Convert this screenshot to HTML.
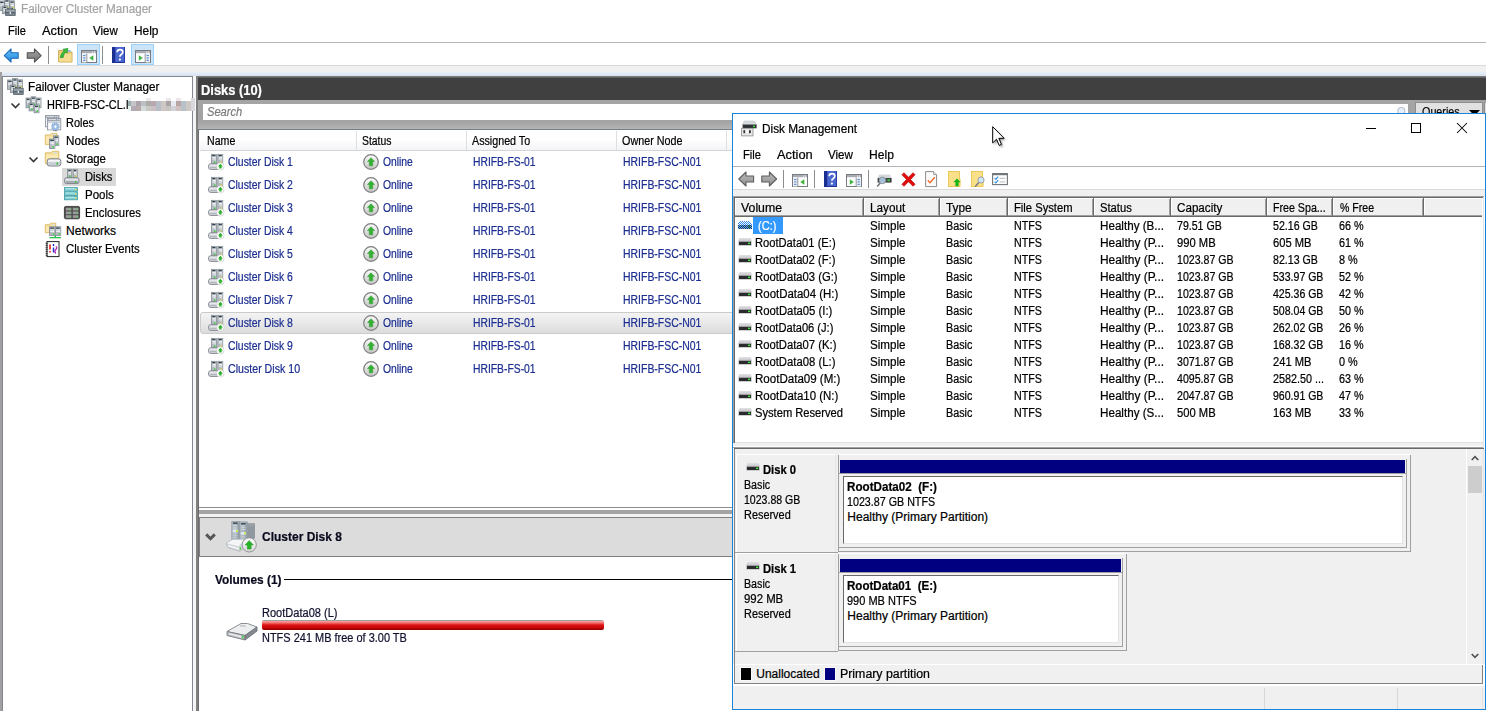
<!DOCTYPE html>
<html><head><meta charset="utf-8"><title>Failover Cluster Manager</title>
<style>
*{box-sizing:border-box;margin:0;padding:0}
html,body{width:1486px;height:711px;overflow:hidden;background:#fff}
body{font-family:"Liberation Sans",sans-serif;font-size:12px;color:#000;position:relative}
.a{position:absolute}
svg.a{overflow:visible}
.t{position:absolute;white-space:pre;transform-origin:0 0;-webkit-text-stroke:0.22px currentColor}
</style></head><body>
<svg class="a" style="left:0px;top:0.4px" width="17" height="17" viewBox="0 0 17 17"><rect x="-0.6" y="1" width="5" height="9.5" fill="#b4bbc2" stroke="#7a838b" stroke-width="0.7"/><rect x="2.15" y="1.4" width="1.85" height="8.7" fill="#c9ced3"/><rect x="0.3" y="1.8" width="3.2" height="1.1" fill="#25343c"/><rect x="0.3" y="3.6" width="3.2" height="0.9" fill="#f6f8fa"/><rect x="0.3" y="5.2" width="3.2" height="0.9" fill="#f6f8fa"/><rect x="2" y="8.1" width="1.5" height="1.6" fill="#3d3"/><rect x="4.6" y="-0.4" width="4.8" height="9" fill="#b4bbc2" stroke="#7a838b" stroke-width="0.7"/><rect x="7.24" y="0" width="1.76" height="8.2" fill="#c9ced3"/><rect x="5.5" y="0.4" width="3" height="1.1" fill="#25343c"/><rect x="5.5" y="2.2" width="3" height="0.9" fill="#f6f8fa"/><rect x="5.5" y="3.8" width="3" height="0.9" fill="#f6f8fa"/><rect x="7" y="6.2" width="1.5" height="1.6" fill="#cd3"/><rect x="9.8" y="0.8" width="4.8" height="8.6" fill="#b4bbc2" stroke="#7a838b" stroke-width="0.7"/><rect x="12.44" y="1.2" width="1.76" height="7.8" fill="#c9ced3"/><rect x="10.7" y="1.6" width="3" height="1.1" fill="#25343c"/><rect x="10.7" y="3.4" width="3" height="0.9" fill="#f6f8fa"/><rect x="10.7" y="5" width="3" height="0.9" fill="#f6f8fa"/><rect x="12.2" y="7" width="1.5" height="1.6" fill="#cd3"/><rect x="2.6" y="6" width="4.6" height="7.7" fill="#b4bbc2" stroke="#7a838b" stroke-width="0.7"/><rect x="5.13" y="6.4" width="1.67" height="6.9" fill="#c9ced3"/><rect x="3.5" y="6.8" width="2.8" height="1.1" fill="#25343c"/><rect x="3.5" y="8.6" width="2.8" height="0.9" fill="#f6f8fa"/><rect x="3.5" y="10.2" width="2.8" height="0.9" fill="#f6f8fa"/><rect x="4.8" y="11.3" width="1.5" height="1.6" fill="#b4bbc2"/><rect x="7.4" y="7.9" width="5.4" height="1.6" fill="#3c464e"/><rect x="8.6" y="8.6" width="3" height="1" fill="#e8ecef"/><rect x="5.6" y="9.3" width="9.6" height="6.2" fill="#7b8791" stroke="#56626c" stroke-width="0.8"/><rect x="6" y="9.7" width="8.8" height="1.9" fill="#9aa5ad"/><rect x="5.6" y="12.3" width="9.6" height="0.9" fill="#4a555e"/><rect x="9.7" y="11.8" width="1.3" height="2" fill="#f4f6f8"/></svg>
<div class="t" style="left:21.15px;top:2px;font-size:12px;line-height:14px;height:14px;color:#a4a4a4;transform:scaleX(0.9724);">Failover Cluster Manager</div>
<div class="t" style="left:8.15px;top:24px;font-size:12px;line-height:14px;height:14px;transform:scaleX(0.9206);">File</div>
<div class="t" style="left:41.95px;top:24px;font-size:12px;line-height:14px;height:14px;transform:scaleX(1.0711);">Action</div>
<div class="t" style="left:92.95px;top:24px;font-size:12px;line-height:14px;height:14px;transform:scaleX(0.9569);">View</div>
<div class="t" style="left:134.05px;top:24px;font-size:12px;line-height:14px;height:14px;transform:scaleX(0.9918);">Help</div>
<div class="a" style="left:0px;top:42px;width:1486px;height:1px;background:#b4b4b4"></div>
<svg class="a" style="left:3px;top:47.6px" width="17" height="16" viewBox="0 0 17 17"><defs><linearGradient id="glb" x1="0" y1="0" x2="0" y2="1"><stop offset="0" stop-color="#6cc3f7"/><stop offset="1" stop-color="#1d86dd"/></linearGradient></defs><path d="M0.8 8 L8 1 V5 H15.6 V11 H8 V15 Z" fill="url(#glb)" stroke="#1565b8" stroke-width="1.1" stroke-linejoin="round"/></svg>
<svg class="a" style="left:26px;top:47.6px" width="17" height="16" viewBox="0 0 17 17"><defs><linearGradient id="grd" x1="0" y1="0" x2="0" y2="1"><stop offset="0" stop-color="#a9a9a9"/><stop offset="1" stop-color="#6f6f6f"/></linearGradient></defs><path d="M0.8 8 L8 1 V5 H15.6 V11 H8 V15 Z" fill="url(#grd)" stroke="#4f4f4f" stroke-width="1.1" stroke-linejoin="round" transform="translate(16.4,0) scale(-1,1)"/></svg>
<div class="a" style="left:48px;top:46px;width:1px;height:18px;background:#8d8d8d"></div>
<svg class="a" style="left:57.6px;top:47.4px" width="15" height="16" viewBox="0 0 15 16"><path d="M0.6 15V3.5h4.6l1.2 1.5H14V15z" fill="#efcf78" stroke="#c9a548" stroke-width="0.9"/><rect x="1.1" y="6.6" width="12.4" height="7.9" fill="#f5dc93"/><rect x="9.6" y="3.2" width="3" height="1.3" fill="#6fa8e8"/><path d="M2.2 10.6q0.6-4.6 4-6.6l-1.3-1.7 5-0.9-1 4.9-1.2-1.4q-2 1.6-2.6 5.6z" fill="#3fbf3f" stroke="#1f8f2a" stroke-width="0.7"/></svg>
<div class="a" style="left:77px;top:44px;width:23px;height:21px;background:#cce4f7;border:1px solid #99d1ff"></div>
<svg class="a" style="left:81px;top:50px" width="16" height="13" viewBox="0 0 16 13"><rect x="0.5" y="0.5" width="15" height="12" fill="#fdfdfd" stroke="#787c82" stroke-width="1"/><rect x="1" y="1" width="14" height="2.2" fill="#a9adb3"/><rect x="11.2" y="1.6" width="1" height="1" fill="#fff"/><rect x="13" y="1.6" width="1" height="1" fill="#fff"/><rect x="1" y="3.5" width="4.5" height="9" fill="#eef0f3"/><path d="M5.8 3.5v9" stroke="#787c82" stroke-width="0.8"/><rect x="2.2" y="5" width="2.2" height="1.1" fill="#4a86d8"/><rect x="2.2" y="7.4" width="2.2" height="1.1" fill="#4a86d8"/><rect x="2.2" y="9.8" width="2.2" height="1.1" fill="#4a86d8"/><path d="M12.3 5.2v5.6l-4-2.8z" fill="#3cb43c"/></svg>
<div class="a" style="left:102px;top:46px;width:1px;height:18px;background:#8d8d8d"></div>
<svg class="a" style="left:112px;top:47px" width="13" height="16" viewBox="0 0 13 16"><rect x="0" y="0" width="13" height="16" fill="#4a66cf"/><rect x="0" y="0" width="3.2" height="16" fill="#1a2f8f"/><rect x="0" y="15" width="13" height="1" fill="#1a2f8f"/><rect x="12" y="0" width="1" height="16" fill="#2a3fa6"/><path d="M5.2 5.2q0-2.6 2.8-2.6t2.8 2.4q0 1.6-1.5 2.5t-1.4 2.3" fill="none" stroke="#fff" stroke-width="1.7"/><circle cx="7.9" cy="12.6" r="1.1" fill="#fff"/></svg>
<div class="a" style="left:131px;top:44px;width:23px;height:21px;background:#cce4f7;border:1px solid #99d1ff"></div>
<svg class="a" style="left:135px;top:50px" width="16" height="13" viewBox="0 0 16 13"><rect x="0.5" y="0.5" width="15" height="12" fill="#fdfdfd" stroke="#787c82" stroke-width="1"/><rect x="1" y="1" width="14" height="2.2" fill="#a9adb3"/><rect x="11.2" y="1.6" width="1" height="1" fill="#fff"/><rect x="13" y="1.6" width="1" height="1" fill="#fff"/><rect x="10.5" y="3.5" width="4.5" height="9" fill="#eef0f3"/><path d="M10.2 3.5v9" stroke="#787c82" stroke-width="0.8"/><rect x="11.6" y="5" width="2.2" height="1.1" fill="#4a86d8"/><rect x="11.6" y="7.4" width="2.2" height="1.1" fill="#4a86d8"/><rect x="11.6" y="9.8" width="2.2" height="1.1" fill="#4a86d8"/><path d="M3.8 5.2v5.6l4-2.8z" fill="#3cb43c"/></svg>
<div class="a" style="left:0px;top:65px;width:1486px;height:1px;background:#dadada"></div>
<div class="a" style="left:0px;top:66px;width:1486px;height:6px;background:#f0f0f0"></div>
<div class="a" style="left:0px;top:72px;width:1486px;height:4px;background:linear-gradient(#e9eff7,#d6e1f0)"></div>
<div class="a" style="left:0px;top:72px;width:2px;height:639px;background:#a0a0a0"></div>
<div class="a" style="left:2px;top:76px;width:191px;height:640px;background:#fff;border:1px solid #828790"></div>
<div class="a" style="left:193px;top:76px;width:3px;height:640px;background:#f5f5f5"></div>
<div class="a" style="left:196px;top:76px;width:2px;height:640px;background:#808080"></div>
<svg class="a" style="left:7.6px;top:79px" width="16" height="16" viewBox="0 0 16 16"><rect x="-0.6" y="1" width="5" height="9.5" fill="#b4bbc2" stroke="#7a838b" stroke-width="0.7"/><rect x="2.15" y="1.4" width="1.85" height="8.7" fill="#c9ced3"/><rect x="0.3" y="1.8" width="3.2" height="1.1" fill="#25343c"/><rect x="0.3" y="3.6" width="3.2" height="0.9" fill="#f6f8fa"/><rect x="0.3" y="5.2" width="3.2" height="0.9" fill="#f6f8fa"/><rect x="2" y="8.1" width="1.5" height="1.6" fill="#3d3"/><rect x="4.6" y="-0.4" width="4.8" height="9" fill="#b4bbc2" stroke="#7a838b" stroke-width="0.7"/><rect x="7.24" y="0" width="1.76" height="8.2" fill="#c9ced3"/><rect x="5.5" y="0.4" width="3" height="1.1" fill="#25343c"/><rect x="5.5" y="2.2" width="3" height="0.9" fill="#f6f8fa"/><rect x="5.5" y="3.8" width="3" height="0.9" fill="#f6f8fa"/><rect x="7" y="6.2" width="1.5" height="1.6" fill="#cd3"/><rect x="9.8" y="0.8" width="4.8" height="8.6" fill="#b4bbc2" stroke="#7a838b" stroke-width="0.7"/><rect x="12.44" y="1.2" width="1.76" height="7.8" fill="#c9ced3"/><rect x="10.7" y="1.6" width="3" height="1.1" fill="#25343c"/><rect x="10.7" y="3.4" width="3" height="0.9" fill="#f6f8fa"/><rect x="10.7" y="5" width="3" height="0.9" fill="#f6f8fa"/><rect x="12.2" y="7" width="1.5" height="1.6" fill="#cd3"/><rect x="2.6" y="6" width="4.6" height="7.7" fill="#b4bbc2" stroke="#7a838b" stroke-width="0.7"/><rect x="5.13" y="6.4" width="1.67" height="6.9" fill="#c9ced3"/><rect x="3.5" y="6.8" width="2.8" height="1.1" fill="#25343c"/><rect x="3.5" y="8.6" width="2.8" height="0.9" fill="#f6f8fa"/><rect x="3.5" y="10.2" width="2.8" height="0.9" fill="#f6f8fa"/><rect x="4.8" y="11.3" width="1.5" height="1.6" fill="#b4bbc2"/><rect x="7.4" y="7.9" width="5.4" height="1.6" fill="#3c464e"/><rect x="8.6" y="8.6" width="3" height="1" fill="#e8ecef"/><rect x="5.6" y="9.3" width="9.6" height="6.2" fill="#7b8791" stroke="#56626c" stroke-width="0.8"/><rect x="6" y="9.7" width="8.8" height="1.9" fill="#9aa5ad"/><rect x="5.6" y="12.3" width="9.6" height="0.9" fill="#4a555e"/><rect x="9.7" y="11.8" width="1.3" height="2" fill="#f4f6f8"/></svg>
<div class="t" style="left:27.85px;top:80px;font-size:12px;line-height:14px;height:14px;transform:scaleX(0.9753);">Failover Cluster Manager</div>
<svg class="a" style="left:26px;top:97px" width="16" height="16" viewBox="0 0 16 16"><rect x="0" y="1" width="4.5" height="9.8" fill="#b4bbc2" stroke="#7a838b" stroke-width="0.7"/><rect x="2.48" y="1.4" width="1.62" height="9" fill="#c9ced3"/><rect x="0.9" y="1.8" width="2.7" height="1.1" fill="#25343c"/><rect x="0.9" y="3.6" width="2.7" height="0.9" fill="#f6f8fa"/><rect x="0.9" y="5.2" width="2.7" height="0.9" fill="#f6f8fa"/><rect x="2.1" y="8.4" width="1.5" height="1.6" fill="#3c3"/><rect x="5.1" y="-0.2" width="4.7" height="9" fill="#b4bbc2" stroke="#7a838b" stroke-width="0.7"/><rect x="7.69" y="0.2" width="1.72" height="8.2" fill="#c9ced3"/><rect x="6" y="0.6" width="2.9" height="1.1" fill="#25343c"/><rect x="6" y="2.4" width="2.9" height="0.9" fill="#f6f8fa"/><rect x="6" y="4" width="2.9" height="0.9" fill="#f6f8fa"/><rect x="7.4" y="6.4" width="1.5" height="1.6" fill="#3c3"/><rect x="10.4" y="1" width="4.6" height="9.8" fill="#b4bbc2" stroke="#7a838b" stroke-width="0.7"/><rect x="12.93" y="1.4" width="1.67" height="9" fill="#c9ced3"/><rect x="11.3" y="1.8" width="2.8" height="1.1" fill="#25343c"/><rect x="11.3" y="3.6" width="2.8" height="0.9" fill="#f6f8fa"/><rect x="11.3" y="5.2" width="2.8" height="0.9" fill="#f6f8fa"/><rect x="12.6" y="8.4" width="1.5" height="1.6" fill="#3c3"/><rect x="3.1" y="6" width="4.5" height="7.9" fill="#b4bbc2" stroke="#7a838b" stroke-width="0.7"/><rect x="5.58" y="6.4" width="1.62" height="7.1" fill="#c9ced3"/><rect x="4" y="6.8" width="2.7" height="1.1" fill="#25343c"/><rect x="4" y="8.6" width="2.7" height="0.9" fill="#f6f8fa"/><rect x="4" y="10.2" width="2.7" height="0.9" fill="#f6f8fa"/><rect x="5.2" y="11.5" width="1.5" height="1.6" fill="#3c3"/><rect x="8.1" y="8" width="4.9" height="7.8" fill="#b4bbc2" stroke="#7a838b" stroke-width="0.7"/><rect x="10.79" y="8.4" width="1.81" height="7" fill="#c9ced3"/><rect x="9" y="8.8" width="3.1" height="1.1" fill="#25343c"/><rect x="9" y="10.6" width="3.1" height="0.9" fill="#f6f8fa"/><rect x="9" y="12.2" width="3.1" height="0.9" fill="#f6f8fa"/><rect x="10.6" y="13.4" width="1.5" height="1.6" fill="#3c3"/></svg>
<svg class="a" style="left:10.5px;top:102.6px" width="9" height="6" viewBox="0 0 9 6"><path d="M0.5 0.5 L4.5 4.6 L8.5 0.5" fill="none" stroke="#3a3a3a" stroke-width="1.7"/></svg>
<div class="t" style="left:46.95px;top:98px;font-size:12px;line-height:14px;height:14px;transform:scaleX(0.9100);">HRIFB-FSC-CL.I</div>
<svg class="a" style="left:45px;top:115px" width="16" height="16" viewBox="0 0 16 16"><rect x="0.4" y="0.4" width="13.6" height="11.4" fill="#f1f3f5" stroke="#868e99" stroke-width="0.8"/><rect x="0.4" y="0.4" width="13.6" height="2.6" fill="#98a0ac"/><rect x="1.5" y="1.3" width="7.5" height="0.8" fill="#f4f6f8"/><rect x="10.2" y="1.1" width="1.1" height="1.1" fill="#f4f6f8"/><rect x="12" y="1.1" width="1.1" height="1.1" fill="#f4f6f8"/><rect x="2.4" y="3.5" width="13.4" height="11.4" fill="#e9ecf0" stroke="#868e99" stroke-width="0.8"/><rect x="2.4" y="3.5" width="13.4" height="2.5" fill="#98a0ac"/><rect x="3.6" y="4.3" width="7.4" height="0.8" fill="#f4f6f8"/><rect x="12.2" y="4.2" width="1.1" height="1.1" fill="#f4f6f8"/><rect x="14" y="4.2" width="1.1" height="1.1" fill="#f4f6f8"/><rect x="2.8" y="6.5" width="12.6" height="1.1" fill="#b7bec8"/><rect x="3.5" y="8.2" width="3.2" height="6" fill="#fff"/><circle cx="10.3" cy="11.6" r="3.5" fill="#a3c1e4" stroke="#86a8d4" stroke-width="1.3" stroke-dasharray="1.2 0.9"/><path d="M10.3 9.9l0.6 1.1 1.1 0.6-1.1 0.6-0.6 1.1-0.6-1.1-1.1-0.6 1.1-0.6z" fill="#fff"/><rect x="8.6" y="15.2" width="0.7" height="1" fill="#4a4f56"/><rect x="10" y="15.2" width="0.7" height="1" fill="#4a4f56"/><rect x="11.4" y="15.2" width="0.7" height="1" fill="#4a4f56"/></svg>
<div class="t" style="left:66.05px;top:116px;font-size:12px;line-height:14px;height:14px;transform:scaleX(0.9127);">Roles</div>
<svg class="a" style="left:45px;top:133px" width="16" height="16" viewBox="0 0 16 16"><path d="M0.3 1.9H5.26L6.44 0.4H12.1V11.6H0.3Z" fill="#f7dd98" stroke="#d8b65e" stroke-width="0.8"/><rect x="1.1" y="3.6" width="10.2" height="7.2" fill="#fbe9b4"/><rect x="7.62" y="1.2" width="3.07" height="1.1" fill="#cfe4fb"/><rect x="8.6" y="2.9" width="5.2" height="9.8" fill="#b4bbc2" stroke="#7a838b" stroke-width="0.7"/><rect x="11.46" y="3.3" width="1.94" height="9" fill="#c9ced3"/><rect x="9.5" y="3.7" width="3.4" height="1.1" fill="#25343c"/><rect x="9.5" y="5.5" width="3.4" height="0.9" fill="#f6f8fa"/><rect x="9.5" y="7.1" width="3.4" height="0.9" fill="#f6f8fa"/><rect x="11.4" y="10.3" width="1.5" height="1.6" fill="#3c3"/><rect x="4.4" y="6" width="5.5" height="9.6" fill="#b4bbc2" stroke="#7a838b" stroke-width="0.7"/><rect x="7.43" y="6.4" width="2.08" height="8.8" fill="#c9ced3"/><rect x="5.3" y="6.8" width="3.7" height="1.1" fill="#25343c"/><rect x="5.3" y="8.6" width="3.7" height="0.9" fill="#f6f8fa"/><rect x="5.3" y="10.2" width="3.7" height="0.9" fill="#f6f8fa"/><rect x="7.5" y="13.2" width="1.5" height="1.6" fill="#3c3"/></svg>
<div class="t" style="left:66.25px;top:134px;font-size:12px;line-height:14px;height:14px;transform:scaleX(0.9715);">Nodes</div>
<svg class="a" style="left:45px;top:151px" width="16" height="16" viewBox="0 0 16 16"><path d="M0.3 1.8H5.97L7.32 0.3H13.8V12.8H0.3Z" fill="#f7dd98" stroke="#d8b65e" stroke-width="0.8"/><rect x="1.1" y="3.5" width="11.9" height="8.5" fill="#fbe9b4"/><rect x="8.67" y="1.1" width="3.51" height="1.1" fill="#cfe4fb"/><rect x="2.2" y="7.8" width="13.6" height="7.2" rx="2.3" fill="#e6e8ec" stroke="#6c7078" stroke-width="0.9"/><rect x="3.2" y="11.2" width="11.6" height="2.8" fill="#c9cdd4"/><rect x="3.6" y="9" width="10.6" height="1.2" fill="#f6f7f9"/><rect x="11.6" y="11.4" width="1.5" height="2.3" fill="#2fc42f"/></svg>
<svg class="a" style="left:29.0px;top:156.6px" width="9" height="6" viewBox="0 0 9 6"><path d="M0.5 0.5 L4.5 4.6 L8.5 0.5" fill="none" stroke="#3a3a3a" stroke-width="1.7"/></svg>
<div class="t" style="left:66.05px;top:152px;font-size:12px;line-height:14px;height:14px;transform:scaleX(0.9491);">Storage</div>
<div class="a" style="left:62px;top:168px;width:54px;height:18px;background:#d9d9d9"></div>
<svg class="a" style="left:64px;top:169px" width="16" height="16" viewBox="0 0 16 16"><rect x="3.5" y="0.3" width="4.2" height="8.5" fill="#b4bbc2" stroke="#7a838b" stroke-width="0.7"/><rect x="5.81" y="0.7" width="1.49" height="7.7" fill="#c9ced3"/><rect x="4.4" y="1.1" width="2.4" height="1.1" fill="#25343c"/><rect x="4.4" y="2.9" width="2.4" height="0.9" fill="#f6f8fa"/><rect x="4.4" y="4.5" width="2.4" height="0.9" fill="#f6f8fa"/><rect x="5.3" y="6.4" width="1.5" height="1.6" fill="#3c3"/><rect x="9" y="0.3" width="4.2" height="8.5" fill="#b4bbc2" stroke="#7a838b" stroke-width="0.7"/><rect x="11.31" y="0.7" width="1.49" height="7.7" fill="#c9ced3"/><rect x="9.9" y="1.1" width="2.4" height="1.1" fill="#25343c"/><rect x="9.9" y="2.9" width="2.4" height="0.9" fill="#f6f8fa"/><rect x="9.9" y="4.5" width="2.4" height="0.9" fill="#f6f8fa"/><rect x="10.8" y="6.4" width="1.5" height="1.6" fill="#cc3"/><rect x="0.6" y="8.8" width="14.4" height="5.8" rx="2" fill="#e3e6ea" stroke="#70757c" stroke-width="0.9"/><rect x="1.5" y="11.8" width="12.6" height="2.2" fill="#a6abb2"/><rect x="11" y="12.1" width="1.6" height="1.6" fill="#3c3"/></svg>
<div class="t" style="left:84.75px;top:170px;font-size:12px;line-height:14px;height:14px;transform:scaleX(0.9307);">Disks</div>
<svg class="a" style="left:64px;top:187px" width="16" height="16" viewBox="0 0 16 16"><rect x="0.5" y="0.6" width="13" height="3.6" fill="#7fd0d4" stroke="#3f9aa3" stroke-width="0.8"/><rect x="1.5" y="1.2" width="9" height="0.9" fill="#c8eef0"/><rect x="11" y="1.8" width="1.4" height="1.4" fill="#f5e04a"/><rect x="0.5" y="4.9" width="13" height="3.6" fill="#7fd0d4" stroke="#3f9aa3" stroke-width="0.8"/><rect x="1.5" y="5.5" width="9" height="0.9" fill="#c8eef0"/><rect x="11" y="6.1" width="1.4" height="1.4" fill="#f5e04a"/><rect x="0.5" y="9.2" width="13" height="3.6" fill="#7fd0d4" stroke="#3f9aa3" stroke-width="0.8"/><rect x="1.5" y="9.8" width="9" height="0.9" fill="#c8eef0"/><rect x="11" y="10.4" width="1.4" height="1.4" fill="#f5e04a"/></svg>
<div class="t" style="left:85.25px;top:188px;font-size:12px;line-height:14px;height:14px;transform:scaleX(0.9594);">Pools</div>
<svg class="a" style="left:64px;top:205px" width="16" height="16" viewBox="0 0 16 16"><rect x="0.4" y="1.4" width="15.2" height="12.4" rx="1.4" fill="#4a4a4a" stroke="#2e2e2e" stroke-width="0.8"/><rect x="1.8" y="2.8" width="5.6" height="2.7" fill="#9b9b9b"/><rect x="5.4" y="3.7" width="1.3" height="1.1" fill="#5d5"/><rect x="1.8" y="6.5" width="5.6" height="2.7" fill="#9b9b9b"/><rect x="5.4" y="7.4" width="1.3" height="1.1" fill="#5d5"/><rect x="1.8" y="10.2" width="5.6" height="2.7" fill="#9b9b9b"/><rect x="5.4" y="11.1" width="1.3" height="1.1" fill="#5d5"/><rect x="8.8" y="2.8" width="5.6" height="2.7" fill="#9b9b9b"/><rect x="12.4" y="3.7" width="1.3" height="1.1" fill="#5d5"/><rect x="8.8" y="6.5" width="5.6" height="2.7" fill="#9b9b9b"/><rect x="12.4" y="7.4" width="1.3" height="1.1" fill="#5d5"/><rect x="8.8" y="10.2" width="5.6" height="2.7" fill="#9b9b9b"/><rect x="12.4" y="11.1" width="1.3" height="1.1" fill="#5d5"/></svg>
<div class="t" style="left:85.25px;top:206px;font-size:12px;line-height:14px;height:14px;transform:scaleX(0.9400);">Enclosures</div>
<svg class="a" style="left:45px;top:223px" width="16" height="16" viewBox="0 0 16 16"><path d="M0.3 1.7H4.71L5.76 0.2H10.8V9.7H0.3Z" fill="#f7dd98" stroke="#d8b65e" stroke-width="0.8"/><rect x="1.1" y="3.4" width="8.9" height="5.5" fill="#fbe9b4"/><rect x="6.81" y="1" width="2.73" height="1.1" fill="#cfe4fb"/><rect x="4.4" y="3.8" width="5.6" height="8.8" fill="#b4bbc2" stroke="#7a838b" stroke-width="0.7"/><rect x="7.48" y="4.2" width="2.12" height="8" fill="#c9ced3"/><rect x="5.3" y="4.6" width="3.8" height="1.1" fill="#25343c"/><rect x="5.3" y="6.4" width="3.8" height="0.9" fill="#f6f8fa"/><rect x="5.3" y="8" width="3.8" height="0.9" fill="#f6f8fa"/><rect x="7.6" y="10.2" width="1.5" height="1.6" fill="#3c3"/><rect x="10.2" y="3.8" width="5.6" height="8.8" fill="#b4bbc2" stroke="#7a838b" stroke-width="0.7"/><rect x="13.28" y="4.2" width="2.12" height="8" fill="#c9ced3"/><rect x="11.1" y="4.6" width="3.8" height="1.1" fill="#25343c"/><rect x="11.1" y="6.4" width="3.8" height="0.9" fill="#f6f8fa"/><rect x="11.1" y="8" width="3.8" height="0.9" fill="#f6f8fa"/><rect x="13.4" y="10.2" width="1.5" height="1.6" fill="#3c3"/><rect x="4.4" y="14" width="11.6" height="1.3" fill="#2fbf4f"/><rect x="9.4" y="12.6" width="1.6" height="1.6" fill="#2fbf4f"/></svg>
<div class="t" style="left:66.05px;top:224px;font-size:12px;line-height:14px;height:14px;">Networks</div>
<svg class="a" style="left:45px;top:241px" width="16" height="16" viewBox="0 0 16 16"><rect x="2" y="0.6" width="12" height="15" fill="#fff" stroke="#222" stroke-width="1"/><rect x="0.6" y="1.8" width="2" height="0.9" fill="#222"/><rect x="0.6" y="3.8" width="2" height="0.9" fill="#222"/><rect x="0.6" y="5.8" width="2" height="0.9" fill="#222"/><rect x="0.6" y="7.8" width="2" height="0.9" fill="#222"/><rect x="0.6" y="9.8" width="2" height="0.9" fill="#222"/><rect x="0.6" y="11.8" width="2" height="0.9" fill="#222"/><rect x="0.6" y="13.8" width="2" height="0.9" fill="#222"/><path d="M5 3.5v5M5 10v1.5" stroke="#e02020" stroke-width="1.6"/><path d="M8.5 3v2M8.5 6.5v5" stroke="#2230d0" stroke-width="1.4"/><path d="M10.8 5.5q2 1 0 3t0 4" stroke="#b020b0" stroke-width="1.2" fill="none"/></svg>
<div class="t" style="left:66.05px;top:242px;font-size:12px;line-height:14px;height:14px;transform:scaleX(0.9445);">Cluster Events</div>
<div class="a" style="left:192px;top:76px;width:1px;height:640px;background:#828790"></div>
<div class="a" style="left:128px;top:98px;width:67px;height:13px;overflow:hidden"><div style="position:absolute;left:0px;top:3px;width:3px;height:5px;background:#9aacac"></div><div style="position:absolute;left:0px;top:8px;width:3px;height:5px;background:#e6f2ee"></div><div style="position:absolute;left:3px;top:3px;width:5px;height:5px;background:#c6c4c8"></div><div style="position:absolute;left:3px;top:8px;width:5px;height:5px;background:#b4aab6"></div><div style="position:absolute;left:8px;top:3px;width:5px;height:5px;background:#aca4aa"></div><div style="position:absolute;left:8px;top:8px;width:5px;height:5px;background:#b8aaaa"></div><div style="position:absolute;left:13px;top:3px;width:5px;height:5px;background:#bcc0c6"></div><div style="position:absolute;left:13px;top:8px;width:5px;height:5px;background:#d4dadc"></div><div style="position:absolute;left:18px;top:3px;width:5px;height:5px;background:#aeaca8"></div><div style="position:absolute;left:18px;top:8px;width:5px;height:5px;background:#c6c8c2"></div><div style="position:absolute;left:23px;top:3px;width:5px;height:5px;background:#b8a8b0"></div><div style="position:absolute;left:23px;top:8px;width:5px;height:5px;background:#ccc0c6"></div><div style="position:absolute;left:28px;top:3px;width:5px;height:5px;background:#b8bec8"></div><div style="position:absolute;left:28px;top:8px;width:5px;height:5px;background:#b8bec8"></div><div style="position:absolute;left:33px;top:3px;width:5px;height:5px;background:#cec8c4"></div><div style="position:absolute;left:33px;top:8px;width:5px;height:5px;background:#cec8c4"></div><div style="position:absolute;left:38px;top:3px;width:5px;height:5px;background:#aaa4a4"></div><div style="position:absolute;left:38px;top:8px;width:5px;height:5px;background:#c6c4c0"></div><div style="position:absolute;left:43px;top:3px;width:5px;height:5px;background:#e8eaf4"></div><div style="position:absolute;left:43px;top:8px;width:5px;height:5px;background:#d0d2d8"></div><div style="position:absolute;left:48px;top:3px;width:5px;height:5px;background:#b8a6a4"></div><div style="position:absolute;left:48px;top:8px;width:5px;height:5px;background:#d0c0c0"></div><div style="position:absolute;left:53px;top:3px;width:5px;height:5px;background:#b8c0c8"></div><div style="position:absolute;left:53px;top:8px;width:5px;height:5px;background:#b8c0c8"></div><div style="position:absolute;left:58px;top:3px;width:5px;height:5px;background:#cec8c4"></div><div style="position:absolute;left:58px;top:8px;width:5px;height:5px;background:#cec8c4"></div><div style="position:absolute;left:18px;top:0px;width:5px;height:3px;background:#ebe7eb"></div><div style="position:absolute;left:38px;top:0px;width:5px;height:3px;background:#ebe7eb"></div><div style="position:absolute;left:48px;top:0px;width:5px;height:3px;background:#ebe7eb"></div><div style="position:absolute;left:0px;top:0px;width:3px;height:3px;background:#eaf4f8"></div><div style="position:absolute;left:63px;top:0px;width:4px;height:13px;background:#d9d9dd"></div></div>
<div class="a" style="left:198px;top:76px;width:1288px;height:2px;background:linear-gradient(#8a8a8a,#555)"></div>
<div class="a" style="left:198px;top:78px;width:1288px;height:22px;background:#404040"></div>
<div class="t" style="left:201.25px;top:82px;font-size:14px;line-height:16px;height:16px;color:#fff;font-weight:bold;transform:scaleX(0.9209);">Disks (10)</div>
<div class="a" style="left:198px;top:100px;width:1288px;height:30px;background:linear-gradient(#a5a5a5 0,#a2a2a2 66%,#a8a8a8 80%,#b4b4b4 96%,#77808a 97%,#77808a 100%)"></div>
<div class="a" style="left:203px;top:104px;width:1205px;height:16px;background:#fff"></div>
<div class="t" style="left:206.75px;top:105px;font-size:12.5px;line-height:14px;height:14px;color:#7a7a7a;font-style:italic;transform:scaleX(0.8902);">Search</div>
<svg class="a" style="left:1396px;top:105px" width="11" height="14" viewBox="0 0 11 14"><circle cx="5.3" cy="6" r="3.5" fill="#e6f0fb" stroke="#bcc6d2" stroke-width="1.2"/><path d="M8 9l2 2.6" stroke="#c8c8c8" stroke-width="1.5"/></svg>
<div class="a" style="left:1415px;top:102px;width:68px;height:22px;background:#e1e1e1;border:1px solid #8e8e8e"></div>
<div class="t" style="left:1421.75px;top:105px;font-size:12.5px;line-height:14px;height:14px;transform:scaleX(0.8617);">Queries</div>
<svg class="a" style="left:1469px;top:109.6px" width="11" height="6" viewBox="0 0 11 6"><path d="M0 0h11l-5.5 5.8z" fill="#000"/></svg>
<div class="a" style="left:1484px;top:102px;width:1px;height:22px;background:#8e8e8e"></div>
<div class="a" style="left:1485px;top:103px;width:1px;height:21px;background:#e1e1e1"></div>
<div class="a" style="left:198px;top:130px;width:1288px;height:378px;background:#fff"></div>
<div class="a" style="left:198px;top:130px;width:1px;height:581px;background:#6d6d6d"></div>
<div class="a" style="left:200px;top:131px;width:1286px;height:20px;background:linear-gradient(#fff 0,#fff 40%,#f2f3f5 100%)"></div>
<div class="a" style="left:200px;top:150px;width:1286px;height:1px;background:#d5d5d5"></div>
<div class="a" style="left:356px;top:131px;width:1px;height:19px;background:#dedfe1"></div>
<div class="a" style="left:466px;top:131px;width:1px;height:19px;background:#dedfe1"></div>
<div class="a" style="left:616px;top:131px;width:1px;height:19px;background:#dedfe1"></div>
<div class="a" style="left:726px;top:131px;width:1px;height:19px;background:#dedfe1"></div>
<div class="t" style="left:206.70px;top:134px;font-size:12.5px;line-height:14px;height:14px;transform:scaleX(0.8490);">Name</div>
<div class="t" style="left:362.15px;top:134px;font-size:12.5px;line-height:14px;height:14px;transform:scaleX(0.8327);">Status</div>
<div class="t" style="left:471.85px;top:134px;font-size:12.5px;line-height:14px;height:14px;transform:scaleX(0.8570);">Assigned To</div>
<div class="t" style="left:621.55px;top:134px;font-size:12.5px;line-height:14px;height:14px;transform:scaleX(0.8616);">Owner Node</div>
<svg class="a" style="left:208px;top:154px" width="17" height="17" viewBox="0 0 17 17"><rect x="3.4" y="0.3" width="5" height="9.5" fill="#b4bbc2" stroke="#7a838b" stroke-width="0.7"/><rect x="6.15" y="0.7" width="1.85" height="8.7" fill="#c9ced3"/><rect x="4.3" y="1.1" width="3.2" height="1.1" fill="#25343c"/><rect x="4.3" y="2.9" width="3.2" height="0.9" fill="#f6f8fa"/><rect x="4.3" y="4.5" width="3.2" height="0.9" fill="#f6f8fa"/><rect x="6" y="7.4" width="1.5" height="1.6" fill="#3c3"/><rect x="9.8" y="0.3" width="5" height="9.5" fill="#b4bbc2" stroke="#7a838b" stroke-width="0.7"/><rect x="12.55" y="0.7" width="1.85" height="8.7" fill="#c9ced3"/><rect x="10.7" y="1.1" width="3.2" height="1.1" fill="#25343c"/><rect x="10.7" y="2.9" width="3.2" height="0.9" fill="#f6f8fa"/><rect x="10.7" y="4.5" width="3.2" height="0.9" fill="#f6f8fa"/><rect x="12.4" y="7.4" width="1.5" height="1.6" fill="#cc3"/><rect x="0.6" y="9.8" width="14.6" height="5.6" rx="2" fill="#e6e8ec" stroke="#777c83" stroke-width="0.9"/><rect x="1.6" y="12.6" width="9" height="1.9" fill="#b4b8be"/><circle cx="12.4" cy="12.4" r="3.7" fill="#fff" stroke="#c9c9c9" stroke-width="0.6"/><path d="M12.4 9.8l2.5 2.6h-1.3v2.2h-2.4v-2.2h-1.3z" fill="#2fae2f"/></svg>
<div class="t" style="left:227.95px;top:155px;font-size:12.5px;line-height:14px;height:14px;color:#1b2e90;transform:scaleX(0.8337);">Cluster Disk 1</div>
<svg class="a" style="left:363px;top:153.8px" width="17" height="17" viewBox="0 0 17 17"><defs><linearGradient id="gon" x1="0" y1="0" x2="0" y2="1"><stop offset="0" stop-color="#fdfdfd"/><stop offset="1" stop-color="#c4c4c4"/></linearGradient></defs><circle cx="8" cy="8" r="7.3" fill="url(#gon)" stroke="#7d7d7d" stroke-width="1.2"/><path d="M8 3.7l3.6 3.9h-1.9v4.2h-3.4v-4.2h-1.9z" fill="#35b035" stroke="#2a9a2a" stroke-width="0.5"/></svg>
<div class="t" style="left:382.55px;top:155px;font-size:12.5px;line-height:14px;height:14px;color:#1b2e90;transform:scaleX(0.8264);">Online</div>
<div class="t" style="left:472.92px;top:155px;font-size:12.5px;line-height:14px;height:14px;color:#1b2e90;transform:scaleX(0.8268);">HRIFB-FS-01</div>
<div class="t" style="left:622.71px;top:155px;font-size:12.5px;line-height:14px;height:14px;color:#1b2e90;transform:scaleX(0.8362);">HRIFB-FSC-N01</div>
<svg class="a" style="left:208px;top:177px" width="17" height="17" viewBox="0 0 17 17"><rect x="3.4" y="0.3" width="5" height="9.5" fill="#b4bbc2" stroke="#7a838b" stroke-width="0.7"/><rect x="6.15" y="0.7" width="1.85" height="8.7" fill="#c9ced3"/><rect x="4.3" y="1.1" width="3.2" height="1.1" fill="#25343c"/><rect x="4.3" y="2.9" width="3.2" height="0.9" fill="#f6f8fa"/><rect x="4.3" y="4.5" width="3.2" height="0.9" fill="#f6f8fa"/><rect x="6" y="7.4" width="1.5" height="1.6" fill="#3c3"/><rect x="9.8" y="0.3" width="5" height="9.5" fill="#b4bbc2" stroke="#7a838b" stroke-width="0.7"/><rect x="12.55" y="0.7" width="1.85" height="8.7" fill="#c9ced3"/><rect x="10.7" y="1.1" width="3.2" height="1.1" fill="#25343c"/><rect x="10.7" y="2.9" width="3.2" height="0.9" fill="#f6f8fa"/><rect x="10.7" y="4.5" width="3.2" height="0.9" fill="#f6f8fa"/><rect x="12.4" y="7.4" width="1.5" height="1.6" fill="#cc3"/><rect x="0.6" y="9.8" width="14.6" height="5.6" rx="2" fill="#e6e8ec" stroke="#777c83" stroke-width="0.9"/><rect x="1.6" y="12.6" width="9" height="1.9" fill="#b4b8be"/><circle cx="12.4" cy="12.4" r="3.7" fill="#fff" stroke="#c9c9c9" stroke-width="0.6"/><path d="M12.4 9.8l2.5 2.6h-1.3v2.2h-2.4v-2.2h-1.3z" fill="#2fae2f"/></svg>
<div class="t" style="left:227.95px;top:178px;font-size:12.5px;line-height:14px;height:14px;color:#1b2e90;transform:scaleX(0.8337);">Cluster Disk 2</div>
<svg class="a" style="left:363px;top:176.8px" width="17" height="17" viewBox="0 0 17 17"><defs><linearGradient id="gon" x1="0" y1="0" x2="0" y2="1"><stop offset="0" stop-color="#fdfdfd"/><stop offset="1" stop-color="#c4c4c4"/></linearGradient></defs><circle cx="8" cy="8" r="7.3" fill="url(#gon)" stroke="#7d7d7d" stroke-width="1.2"/><path d="M8 3.7l3.6 3.9h-1.9v4.2h-3.4v-4.2h-1.9z" fill="#35b035" stroke="#2a9a2a" stroke-width="0.5"/></svg>
<div class="t" style="left:382.55px;top:178px;font-size:12.5px;line-height:14px;height:14px;color:#1b2e90;transform:scaleX(0.8264);">Online</div>
<div class="t" style="left:472.92px;top:178px;font-size:12.5px;line-height:14px;height:14px;color:#1b2e90;transform:scaleX(0.8268);">HRIFB-FS-01</div>
<div class="t" style="left:622.71px;top:178px;font-size:12.5px;line-height:14px;height:14px;color:#1b2e90;transform:scaleX(0.8362);">HRIFB-FSC-N01</div>
<svg class="a" style="left:208px;top:200px" width="17" height="17" viewBox="0 0 17 17"><rect x="3.4" y="0.3" width="5" height="9.5" fill="#b4bbc2" stroke="#7a838b" stroke-width="0.7"/><rect x="6.15" y="0.7" width="1.85" height="8.7" fill="#c9ced3"/><rect x="4.3" y="1.1" width="3.2" height="1.1" fill="#25343c"/><rect x="4.3" y="2.9" width="3.2" height="0.9" fill="#f6f8fa"/><rect x="4.3" y="4.5" width="3.2" height="0.9" fill="#f6f8fa"/><rect x="6" y="7.4" width="1.5" height="1.6" fill="#3c3"/><rect x="9.8" y="0.3" width="5" height="9.5" fill="#b4bbc2" stroke="#7a838b" stroke-width="0.7"/><rect x="12.55" y="0.7" width="1.85" height="8.7" fill="#c9ced3"/><rect x="10.7" y="1.1" width="3.2" height="1.1" fill="#25343c"/><rect x="10.7" y="2.9" width="3.2" height="0.9" fill="#f6f8fa"/><rect x="10.7" y="4.5" width="3.2" height="0.9" fill="#f6f8fa"/><rect x="12.4" y="7.4" width="1.5" height="1.6" fill="#cc3"/><rect x="0.6" y="9.8" width="14.6" height="5.6" rx="2" fill="#e6e8ec" stroke="#777c83" stroke-width="0.9"/><rect x="1.6" y="12.6" width="9" height="1.9" fill="#b4b8be"/><circle cx="12.4" cy="12.4" r="3.7" fill="#fff" stroke="#c9c9c9" stroke-width="0.6"/><path d="M12.4 9.8l2.5 2.6h-1.3v2.2h-2.4v-2.2h-1.3z" fill="#2fae2f"/></svg>
<div class="t" style="left:227.95px;top:201px;font-size:12.5px;line-height:14px;height:14px;color:#1b2e90;transform:scaleX(0.8337);">Cluster Disk 3</div>
<svg class="a" style="left:363px;top:199.8px" width="17" height="17" viewBox="0 0 17 17"><defs><linearGradient id="gon" x1="0" y1="0" x2="0" y2="1"><stop offset="0" stop-color="#fdfdfd"/><stop offset="1" stop-color="#c4c4c4"/></linearGradient></defs><circle cx="8" cy="8" r="7.3" fill="url(#gon)" stroke="#7d7d7d" stroke-width="1.2"/><path d="M8 3.7l3.6 3.9h-1.9v4.2h-3.4v-4.2h-1.9z" fill="#35b035" stroke="#2a9a2a" stroke-width="0.5"/></svg>
<div class="t" style="left:382.55px;top:201px;font-size:12.5px;line-height:14px;height:14px;color:#1b2e90;transform:scaleX(0.8264);">Online</div>
<div class="t" style="left:472.92px;top:201px;font-size:12.5px;line-height:14px;height:14px;color:#1b2e90;transform:scaleX(0.8268);">HRIFB-FS-01</div>
<div class="t" style="left:622.71px;top:201px;font-size:12.5px;line-height:14px;height:14px;color:#1b2e90;transform:scaleX(0.8362);">HRIFB-FSC-N01</div>
<svg class="a" style="left:208px;top:223px" width="17" height="17" viewBox="0 0 17 17"><rect x="3.4" y="0.3" width="5" height="9.5" fill="#b4bbc2" stroke="#7a838b" stroke-width="0.7"/><rect x="6.15" y="0.7" width="1.85" height="8.7" fill="#c9ced3"/><rect x="4.3" y="1.1" width="3.2" height="1.1" fill="#25343c"/><rect x="4.3" y="2.9" width="3.2" height="0.9" fill="#f6f8fa"/><rect x="4.3" y="4.5" width="3.2" height="0.9" fill="#f6f8fa"/><rect x="6" y="7.4" width="1.5" height="1.6" fill="#3c3"/><rect x="9.8" y="0.3" width="5" height="9.5" fill="#b4bbc2" stroke="#7a838b" stroke-width="0.7"/><rect x="12.55" y="0.7" width="1.85" height="8.7" fill="#c9ced3"/><rect x="10.7" y="1.1" width="3.2" height="1.1" fill="#25343c"/><rect x="10.7" y="2.9" width="3.2" height="0.9" fill="#f6f8fa"/><rect x="10.7" y="4.5" width="3.2" height="0.9" fill="#f6f8fa"/><rect x="12.4" y="7.4" width="1.5" height="1.6" fill="#cc3"/><rect x="0.6" y="9.8" width="14.6" height="5.6" rx="2" fill="#e6e8ec" stroke="#777c83" stroke-width="0.9"/><rect x="1.6" y="12.6" width="9" height="1.9" fill="#b4b8be"/><circle cx="12.4" cy="12.4" r="3.7" fill="#fff" stroke="#c9c9c9" stroke-width="0.6"/><path d="M12.4 9.8l2.5 2.6h-1.3v2.2h-2.4v-2.2h-1.3z" fill="#2fae2f"/></svg>
<div class="t" style="left:227.95px;top:224px;font-size:12.5px;line-height:14px;height:14px;color:#1b2e90;transform:scaleX(0.8337);">Cluster Disk 4</div>
<svg class="a" style="left:363px;top:222.8px" width="17" height="17" viewBox="0 0 17 17"><defs><linearGradient id="gon" x1="0" y1="0" x2="0" y2="1"><stop offset="0" stop-color="#fdfdfd"/><stop offset="1" stop-color="#c4c4c4"/></linearGradient></defs><circle cx="8" cy="8" r="7.3" fill="url(#gon)" stroke="#7d7d7d" stroke-width="1.2"/><path d="M8 3.7l3.6 3.9h-1.9v4.2h-3.4v-4.2h-1.9z" fill="#35b035" stroke="#2a9a2a" stroke-width="0.5"/></svg>
<div class="t" style="left:382.55px;top:224px;font-size:12.5px;line-height:14px;height:14px;color:#1b2e90;transform:scaleX(0.8264);">Online</div>
<div class="t" style="left:472.92px;top:224px;font-size:12.5px;line-height:14px;height:14px;color:#1b2e90;transform:scaleX(0.8268);">HRIFB-FS-01</div>
<div class="t" style="left:622.71px;top:224px;font-size:12.5px;line-height:14px;height:14px;color:#1b2e90;transform:scaleX(0.8362);">HRIFB-FSC-N01</div>
<svg class="a" style="left:208px;top:246px" width="17" height="17" viewBox="0 0 17 17"><rect x="3.4" y="0.3" width="5" height="9.5" fill="#b4bbc2" stroke="#7a838b" stroke-width="0.7"/><rect x="6.15" y="0.7" width="1.85" height="8.7" fill="#c9ced3"/><rect x="4.3" y="1.1" width="3.2" height="1.1" fill="#25343c"/><rect x="4.3" y="2.9" width="3.2" height="0.9" fill="#f6f8fa"/><rect x="4.3" y="4.5" width="3.2" height="0.9" fill="#f6f8fa"/><rect x="6" y="7.4" width="1.5" height="1.6" fill="#3c3"/><rect x="9.8" y="0.3" width="5" height="9.5" fill="#b4bbc2" stroke="#7a838b" stroke-width="0.7"/><rect x="12.55" y="0.7" width="1.85" height="8.7" fill="#c9ced3"/><rect x="10.7" y="1.1" width="3.2" height="1.1" fill="#25343c"/><rect x="10.7" y="2.9" width="3.2" height="0.9" fill="#f6f8fa"/><rect x="10.7" y="4.5" width="3.2" height="0.9" fill="#f6f8fa"/><rect x="12.4" y="7.4" width="1.5" height="1.6" fill="#cc3"/><rect x="0.6" y="9.8" width="14.6" height="5.6" rx="2" fill="#e6e8ec" stroke="#777c83" stroke-width="0.9"/><rect x="1.6" y="12.6" width="9" height="1.9" fill="#b4b8be"/><circle cx="12.4" cy="12.4" r="3.7" fill="#fff" stroke="#c9c9c9" stroke-width="0.6"/><path d="M12.4 9.8l2.5 2.6h-1.3v2.2h-2.4v-2.2h-1.3z" fill="#2fae2f"/></svg>
<div class="t" style="left:227.95px;top:247px;font-size:12.5px;line-height:14px;height:14px;color:#1b2e90;transform:scaleX(0.8337);">Cluster Disk 5</div>
<svg class="a" style="left:363px;top:245.8px" width="17" height="17" viewBox="0 0 17 17"><defs><linearGradient id="gon" x1="0" y1="0" x2="0" y2="1"><stop offset="0" stop-color="#fdfdfd"/><stop offset="1" stop-color="#c4c4c4"/></linearGradient></defs><circle cx="8" cy="8" r="7.3" fill="url(#gon)" stroke="#7d7d7d" stroke-width="1.2"/><path d="M8 3.7l3.6 3.9h-1.9v4.2h-3.4v-4.2h-1.9z" fill="#35b035" stroke="#2a9a2a" stroke-width="0.5"/></svg>
<div class="t" style="left:382.55px;top:247px;font-size:12.5px;line-height:14px;height:14px;color:#1b2e90;transform:scaleX(0.8264);">Online</div>
<div class="t" style="left:472.92px;top:247px;font-size:12.5px;line-height:14px;height:14px;color:#1b2e90;transform:scaleX(0.8268);">HRIFB-FS-01</div>
<div class="t" style="left:622.71px;top:247px;font-size:12.5px;line-height:14px;height:14px;color:#1b2e90;transform:scaleX(0.8362);">HRIFB-FSC-N01</div>
<svg class="a" style="left:208px;top:269px" width="17" height="17" viewBox="0 0 17 17"><rect x="3.4" y="0.3" width="5" height="9.5" fill="#b4bbc2" stroke="#7a838b" stroke-width="0.7"/><rect x="6.15" y="0.7" width="1.85" height="8.7" fill="#c9ced3"/><rect x="4.3" y="1.1" width="3.2" height="1.1" fill="#25343c"/><rect x="4.3" y="2.9" width="3.2" height="0.9" fill="#f6f8fa"/><rect x="4.3" y="4.5" width="3.2" height="0.9" fill="#f6f8fa"/><rect x="6" y="7.4" width="1.5" height="1.6" fill="#3c3"/><rect x="9.8" y="0.3" width="5" height="9.5" fill="#b4bbc2" stroke="#7a838b" stroke-width="0.7"/><rect x="12.55" y="0.7" width="1.85" height="8.7" fill="#c9ced3"/><rect x="10.7" y="1.1" width="3.2" height="1.1" fill="#25343c"/><rect x="10.7" y="2.9" width="3.2" height="0.9" fill="#f6f8fa"/><rect x="10.7" y="4.5" width="3.2" height="0.9" fill="#f6f8fa"/><rect x="12.4" y="7.4" width="1.5" height="1.6" fill="#cc3"/><rect x="0.6" y="9.8" width="14.6" height="5.6" rx="2" fill="#e6e8ec" stroke="#777c83" stroke-width="0.9"/><rect x="1.6" y="12.6" width="9" height="1.9" fill="#b4b8be"/><circle cx="12.4" cy="12.4" r="3.7" fill="#fff" stroke="#c9c9c9" stroke-width="0.6"/><path d="M12.4 9.8l2.5 2.6h-1.3v2.2h-2.4v-2.2h-1.3z" fill="#2fae2f"/></svg>
<div class="t" style="left:227.95px;top:270px;font-size:12.5px;line-height:14px;height:14px;color:#1b2e90;transform:scaleX(0.8337);">Cluster Disk 6</div>
<svg class="a" style="left:363px;top:268.8px" width="17" height="17" viewBox="0 0 17 17"><defs><linearGradient id="gon" x1="0" y1="0" x2="0" y2="1"><stop offset="0" stop-color="#fdfdfd"/><stop offset="1" stop-color="#c4c4c4"/></linearGradient></defs><circle cx="8" cy="8" r="7.3" fill="url(#gon)" stroke="#7d7d7d" stroke-width="1.2"/><path d="M8 3.7l3.6 3.9h-1.9v4.2h-3.4v-4.2h-1.9z" fill="#35b035" stroke="#2a9a2a" stroke-width="0.5"/></svg>
<div class="t" style="left:382.55px;top:270px;font-size:12.5px;line-height:14px;height:14px;color:#1b2e90;transform:scaleX(0.8264);">Online</div>
<div class="t" style="left:472.92px;top:270px;font-size:12.5px;line-height:14px;height:14px;color:#1b2e90;transform:scaleX(0.8268);">HRIFB-FS-01</div>
<div class="t" style="left:622.71px;top:270px;font-size:12.5px;line-height:14px;height:14px;color:#1b2e90;transform:scaleX(0.8362);">HRIFB-FSC-N01</div>
<svg class="a" style="left:208px;top:292px" width="17" height="17" viewBox="0 0 17 17"><rect x="3.4" y="0.3" width="5" height="9.5" fill="#b4bbc2" stroke="#7a838b" stroke-width="0.7"/><rect x="6.15" y="0.7" width="1.85" height="8.7" fill="#c9ced3"/><rect x="4.3" y="1.1" width="3.2" height="1.1" fill="#25343c"/><rect x="4.3" y="2.9" width="3.2" height="0.9" fill="#f6f8fa"/><rect x="4.3" y="4.5" width="3.2" height="0.9" fill="#f6f8fa"/><rect x="6" y="7.4" width="1.5" height="1.6" fill="#3c3"/><rect x="9.8" y="0.3" width="5" height="9.5" fill="#b4bbc2" stroke="#7a838b" stroke-width="0.7"/><rect x="12.55" y="0.7" width="1.85" height="8.7" fill="#c9ced3"/><rect x="10.7" y="1.1" width="3.2" height="1.1" fill="#25343c"/><rect x="10.7" y="2.9" width="3.2" height="0.9" fill="#f6f8fa"/><rect x="10.7" y="4.5" width="3.2" height="0.9" fill="#f6f8fa"/><rect x="12.4" y="7.4" width="1.5" height="1.6" fill="#cc3"/><rect x="0.6" y="9.8" width="14.6" height="5.6" rx="2" fill="#e6e8ec" stroke="#777c83" stroke-width="0.9"/><rect x="1.6" y="12.6" width="9" height="1.9" fill="#b4b8be"/><circle cx="12.4" cy="12.4" r="3.7" fill="#fff" stroke="#c9c9c9" stroke-width="0.6"/><path d="M12.4 9.8l2.5 2.6h-1.3v2.2h-2.4v-2.2h-1.3z" fill="#2fae2f"/></svg>
<div class="t" style="left:227.95px;top:293px;font-size:12.5px;line-height:14px;height:14px;color:#1b2e90;transform:scaleX(0.8337);">Cluster Disk 7</div>
<svg class="a" style="left:363px;top:291.8px" width="17" height="17" viewBox="0 0 17 17"><defs><linearGradient id="gon" x1="0" y1="0" x2="0" y2="1"><stop offset="0" stop-color="#fdfdfd"/><stop offset="1" stop-color="#c4c4c4"/></linearGradient></defs><circle cx="8" cy="8" r="7.3" fill="url(#gon)" stroke="#7d7d7d" stroke-width="1.2"/><path d="M8 3.7l3.6 3.9h-1.9v4.2h-3.4v-4.2h-1.9z" fill="#35b035" stroke="#2a9a2a" stroke-width="0.5"/></svg>
<div class="t" style="left:382.55px;top:293px;font-size:12.5px;line-height:14px;height:14px;color:#1b2e90;transform:scaleX(0.8264);">Online</div>
<div class="t" style="left:472.92px;top:293px;font-size:12.5px;line-height:14px;height:14px;color:#1b2e90;transform:scaleX(0.8268);">HRIFB-FS-01</div>
<div class="t" style="left:622.71px;top:293px;font-size:12.5px;line-height:14px;height:14px;color:#1b2e90;transform:scaleX(0.8362);">HRIFB-FSC-N01</div>
<div class="a" style="left:200px;top:312px;width:1286px;height:22px;background:linear-gradient(#f4f4f4,#dcdcdc);border:1px solid #cbcbcb;border-radius:3px"></div>
<svg class="a" style="left:208px;top:315px" width="17" height="17" viewBox="0 0 17 17"><rect x="3.4" y="0.3" width="5" height="9.5" fill="#b4bbc2" stroke="#7a838b" stroke-width="0.7"/><rect x="6.15" y="0.7" width="1.85" height="8.7" fill="#c9ced3"/><rect x="4.3" y="1.1" width="3.2" height="1.1" fill="#25343c"/><rect x="4.3" y="2.9" width="3.2" height="0.9" fill="#f6f8fa"/><rect x="4.3" y="4.5" width="3.2" height="0.9" fill="#f6f8fa"/><rect x="6" y="7.4" width="1.5" height="1.6" fill="#3c3"/><rect x="9.8" y="0.3" width="5" height="9.5" fill="#b4bbc2" stroke="#7a838b" stroke-width="0.7"/><rect x="12.55" y="0.7" width="1.85" height="8.7" fill="#c9ced3"/><rect x="10.7" y="1.1" width="3.2" height="1.1" fill="#25343c"/><rect x="10.7" y="2.9" width="3.2" height="0.9" fill="#f6f8fa"/><rect x="10.7" y="4.5" width="3.2" height="0.9" fill="#f6f8fa"/><rect x="12.4" y="7.4" width="1.5" height="1.6" fill="#cc3"/><rect x="0.6" y="9.8" width="14.6" height="5.6" rx="2" fill="#e6e8ec" stroke="#777c83" stroke-width="0.9"/><rect x="1.6" y="12.6" width="9" height="1.9" fill="#b4b8be"/><circle cx="12.4" cy="12.4" r="3.7" fill="#fff" stroke="#c9c9c9" stroke-width="0.6"/><path d="M12.4 9.8l2.5 2.6h-1.3v2.2h-2.4v-2.2h-1.3z" fill="#2fae2f"/></svg>
<div class="t" style="left:227.95px;top:316px;font-size:12.5px;line-height:14px;height:14px;color:#1b2e90;transform:scaleX(0.8337);">Cluster Disk 8</div>
<svg class="a" style="left:363px;top:314.8px" width="17" height="17" viewBox="0 0 17 17"><defs><linearGradient id="gon" x1="0" y1="0" x2="0" y2="1"><stop offset="0" stop-color="#fdfdfd"/><stop offset="1" stop-color="#c4c4c4"/></linearGradient></defs><circle cx="8" cy="8" r="7.3" fill="url(#gon)" stroke="#7d7d7d" stroke-width="1.2"/><path d="M8 3.7l3.6 3.9h-1.9v4.2h-3.4v-4.2h-1.9z" fill="#35b035" stroke="#2a9a2a" stroke-width="0.5"/></svg>
<div class="t" style="left:382.55px;top:316px;font-size:12.5px;line-height:14px;height:14px;color:#1b2e90;transform:scaleX(0.8264);">Online</div>
<div class="t" style="left:472.92px;top:316px;font-size:12.5px;line-height:14px;height:14px;color:#1b2e90;transform:scaleX(0.8268);">HRIFB-FS-01</div>
<div class="t" style="left:622.71px;top:316px;font-size:12.5px;line-height:14px;height:14px;color:#1b2e90;transform:scaleX(0.8362);">HRIFB-FSC-N01</div>
<svg class="a" style="left:208px;top:338px" width="17" height="17" viewBox="0 0 17 17"><rect x="3.4" y="0.3" width="5" height="9.5" fill="#b4bbc2" stroke="#7a838b" stroke-width="0.7"/><rect x="6.15" y="0.7" width="1.85" height="8.7" fill="#c9ced3"/><rect x="4.3" y="1.1" width="3.2" height="1.1" fill="#25343c"/><rect x="4.3" y="2.9" width="3.2" height="0.9" fill="#f6f8fa"/><rect x="4.3" y="4.5" width="3.2" height="0.9" fill="#f6f8fa"/><rect x="6" y="7.4" width="1.5" height="1.6" fill="#3c3"/><rect x="9.8" y="0.3" width="5" height="9.5" fill="#b4bbc2" stroke="#7a838b" stroke-width="0.7"/><rect x="12.55" y="0.7" width="1.85" height="8.7" fill="#c9ced3"/><rect x="10.7" y="1.1" width="3.2" height="1.1" fill="#25343c"/><rect x="10.7" y="2.9" width="3.2" height="0.9" fill="#f6f8fa"/><rect x="10.7" y="4.5" width="3.2" height="0.9" fill="#f6f8fa"/><rect x="12.4" y="7.4" width="1.5" height="1.6" fill="#cc3"/><rect x="0.6" y="9.8" width="14.6" height="5.6" rx="2" fill="#e6e8ec" stroke="#777c83" stroke-width="0.9"/><rect x="1.6" y="12.6" width="9" height="1.9" fill="#b4b8be"/><circle cx="12.4" cy="12.4" r="3.7" fill="#fff" stroke="#c9c9c9" stroke-width="0.6"/><path d="M12.4 9.8l2.5 2.6h-1.3v2.2h-2.4v-2.2h-1.3z" fill="#2fae2f"/></svg>
<div class="t" style="left:227.95px;top:339px;font-size:12.5px;line-height:14px;height:14px;color:#1b2e90;transform:scaleX(0.8337);">Cluster Disk 9</div>
<svg class="a" style="left:363px;top:337.8px" width="17" height="17" viewBox="0 0 17 17"><defs><linearGradient id="gon" x1="0" y1="0" x2="0" y2="1"><stop offset="0" stop-color="#fdfdfd"/><stop offset="1" stop-color="#c4c4c4"/></linearGradient></defs><circle cx="8" cy="8" r="7.3" fill="url(#gon)" stroke="#7d7d7d" stroke-width="1.2"/><path d="M8 3.7l3.6 3.9h-1.9v4.2h-3.4v-4.2h-1.9z" fill="#35b035" stroke="#2a9a2a" stroke-width="0.5"/></svg>
<div class="t" style="left:382.55px;top:339px;font-size:12.5px;line-height:14px;height:14px;color:#1b2e90;transform:scaleX(0.8264);">Online</div>
<div class="t" style="left:472.92px;top:339px;font-size:12.5px;line-height:14px;height:14px;color:#1b2e90;transform:scaleX(0.8268);">HRIFB-FS-01</div>
<div class="t" style="left:622.71px;top:339px;font-size:12.5px;line-height:14px;height:14px;color:#1b2e90;transform:scaleX(0.8362);">HRIFB-FSC-N01</div>
<svg class="a" style="left:208px;top:361px" width="17" height="17" viewBox="0 0 17 17"><rect x="3.4" y="0.3" width="5" height="9.5" fill="#b4bbc2" stroke="#7a838b" stroke-width="0.7"/><rect x="6.15" y="0.7" width="1.85" height="8.7" fill="#c9ced3"/><rect x="4.3" y="1.1" width="3.2" height="1.1" fill="#25343c"/><rect x="4.3" y="2.9" width="3.2" height="0.9" fill="#f6f8fa"/><rect x="4.3" y="4.5" width="3.2" height="0.9" fill="#f6f8fa"/><rect x="6" y="7.4" width="1.5" height="1.6" fill="#3c3"/><rect x="9.8" y="0.3" width="5" height="9.5" fill="#b4bbc2" stroke="#7a838b" stroke-width="0.7"/><rect x="12.55" y="0.7" width="1.85" height="8.7" fill="#c9ced3"/><rect x="10.7" y="1.1" width="3.2" height="1.1" fill="#25343c"/><rect x="10.7" y="2.9" width="3.2" height="0.9" fill="#f6f8fa"/><rect x="10.7" y="4.5" width="3.2" height="0.9" fill="#f6f8fa"/><rect x="12.4" y="7.4" width="1.5" height="1.6" fill="#cc3"/><rect x="0.6" y="9.8" width="14.6" height="5.6" rx="2" fill="#e6e8ec" stroke="#777c83" stroke-width="0.9"/><rect x="1.6" y="12.6" width="9" height="1.9" fill="#b4b8be"/><circle cx="12.4" cy="12.4" r="3.7" fill="#fff" stroke="#c9c9c9" stroke-width="0.6"/><path d="M12.4 9.8l2.5 2.6h-1.3v2.2h-2.4v-2.2h-1.3z" fill="#2fae2f"/></svg>
<div class="t" style="left:227.95px;top:362px;font-size:12.5px;line-height:14px;height:14px;color:#1b2e90;transform:scaleX(0.8503);">Cluster Disk 10</div>
<svg class="a" style="left:363px;top:360.8px" width="17" height="17" viewBox="0 0 17 17"><defs><linearGradient id="gon" x1="0" y1="0" x2="0" y2="1"><stop offset="0" stop-color="#fdfdfd"/><stop offset="1" stop-color="#c4c4c4"/></linearGradient></defs><circle cx="8" cy="8" r="7.3" fill="url(#gon)" stroke="#7d7d7d" stroke-width="1.2"/><path d="M8 3.7l3.6 3.9h-1.9v4.2h-3.4v-4.2h-1.9z" fill="#35b035" stroke="#2a9a2a" stroke-width="0.5"/></svg>
<div class="t" style="left:382.55px;top:362px;font-size:12.5px;line-height:14px;height:14px;color:#1b2e90;transform:scaleX(0.8264);">Online</div>
<div class="t" style="left:472.92px;top:362px;font-size:12.5px;line-height:14px;height:14px;color:#1b2e90;transform:scaleX(0.8268);">HRIFB-FS-01</div>
<div class="t" style="left:622.71px;top:362px;font-size:12.5px;line-height:14px;height:14px;color:#1b2e90;transform:scaleX(0.8362);">HRIFB-FSC-N01</div>
<div class="a" style="left:199px;top:507px;width:1287px;height:1px;background:#8c8c8c"></div>
<div class="a" style="left:199px;top:508px;width:1287px;height:2px;background:#fff"></div>
<div class="a" style="left:199px;top:510px;width:1287px;height:4px;background:#a3a3a3"></div>
<div class="a" style="left:199px;top:514px;width:1287px;height:3px;background:#f2f2f2"></div>
<div class="a" style="left:199px;top:517px;width:1287px;height:40px;background:#dcdcdc;border:1px solid #7f7f7f"></div>
<svg class="a" style="left:205px;top:533px" width="11" height="8" viewBox="0 0 11 8"><path d="M1.2 1.4 L5.5 5.7 L9.8 1.4" fill="none" stroke="#555" stroke-width="2.9"/></svg>
<svg class="a" style="left:225px;top:520px" width="33" height="33" viewBox="0 0 33 33"><rect x="22.5" y="3.7" width="7.1" height="14.6" fill="#8f999f" stroke="#7a848a" stroke-width="0.5"/><rect x="23.4" y="4.6" width="5.4" height="0.8" fill="#a9b2b8"/><rect x="6.8" y="1.3" width="7.7" height="18.3" fill="#aeb8c0" stroke="#879199" stroke-width="0.6"/><rect x="11.57" y="1.6" width="2.63" height="17.7" fill="#98a2aa"/><rect x="8" y="2.5" width="4.5" height="1.4" fill="#3a464e"/><rect x="7.8" y="4.9" width="4.7" height="0.8" fill="#d3dae0"/><rect x="7.8" y="6.7" width="4.7" height="0.8" fill="#d3dae0"/><rect x="7.8" y="8.5" width="4.7" height="0.8" fill="#d3dae0"/><rect x="7.8" y="9.7" width="5.1" height="2.6" fill="#dfeaf6"/><rect x="11.1" y="10.1" width="1.9" height="1.9" fill="#c6ef3a"/><rect x="7.8" y="13.5" width="4.7" height="0.8" fill="#c6ced5"/><rect x="7.8" y="15.3" width="4.7" height="0.8" fill="#c6ced5"/><rect x="7.8" y="17.1" width="4.7" height="0.8" fill="#c6ced5"/><rect x="14.8" y="1.9" width="7.7" height="18.1" fill="#aeb8c0" stroke="#879199" stroke-width="0.6"/><rect x="19.57" y="2.2" width="2.63" height="17.5" fill="#98a2aa"/><rect x="16" y="3.1" width="4.5" height="1.4" fill="#3a464e"/><rect x="15.8" y="5.5" width="4.7" height="0.8" fill="#d3dae0"/><rect x="15.8" y="7.3" width="4.7" height="0.8" fill="#d3dae0"/><rect x="15.8" y="9.1" width="4.7" height="0.8" fill="#d3dae0"/><rect x="15.8" y="12.1" width="5.1" height="2.6" fill="#dfeaf6"/><rect x="19.1" y="12.5" width="1.9" height="1.9" fill="#c6ef3a"/><rect x="15.8" y="15.9" width="4.7" height="0.8" fill="#c6ced5"/><rect x="15.8" y="17.7" width="4.7" height="0.8" fill="#c6ced5"/><path d="M1 23.4L7.6 19.2H20.5L19.8 27 15 31.4 3.2 27.6z" fill="#d3d7db" stroke="#a9aeb4" stroke-width="0.7"/><path d="M1.6 23.3L7.8 19.8H19.6L13.6 26.2z" fill="#f4f5f7"/><path d="M3 25.6l11 3.6" stroke="#f7f8f9" stroke-width="1.3"/><rect x="14.6" y="27.2" width="1.5" height="2.6" fill="#5fd04a"/><defs><linearGradient id="gbd" x1="0" y1="0" x2="0" y2="1"><stop offset="0" stop-color="#fff"/><stop offset="1" stop-color="#d6d6d6"/></linearGradient></defs><circle cx="24.2" cy="24.9" r="7.1" fill="url(#gbd)" stroke="#8a8a8a" stroke-width="0.9"/><path d="M24.2 20.6l4.1 4.3h-2.2v4.2h-3.8v-4.2h-2.2z" fill="#27b427" stroke="#1f981f" stroke-width="0.5"/></svg>
<div class="t" style="left:261.55px;top:530px;font-size:12.5px;line-height:14px;height:14px;color:#0a0a1e;font-weight:bold;transform:scaleX(0.9590);">Cluster Disk 8</div>
<div class="a" style="left:199px;top:557px;width:1287px;height:154px;background:#fff"></div>
<div class="t" style="left:214.95px;top:573px;font-size:12.5px;line-height:14px;height:14px;color:#0a0a1e;font-weight:bold;transform:scaleX(0.9504);">Volumes (1)</div>
<div class="a" style="left:284px;top:579px;width:1202px;height:1px;background:#000"></div>
<svg class="a" style="left:226px;top:622px" width="33" height="18" viewBox="0 0 33 18"><path d="M1 9.5L15 1.5h6.5l9.5 3.5-12 8.5z" fill="#eceeef" stroke="#7f848a" stroke-width="0.9"/><path d="M1 9.5l18 4v4.5l-18-4.5z" fill="#bdc1c6" stroke="#777c82" stroke-width="0.9"/><path d="M19 13.5l12-8.5v4l-12 9z" fill="#858a90" stroke="#6a6f75" stroke-width="0.9"/><path d="M3 11l12 2.8v1.6l-12-3z" fill="#e8eaec"/><rect x="16" y="13.6" width="1.6" height="3" fill="#4fd24f"/><path d="M14 3.2h5l1 1.2h-5.5z" fill="#b8bcc2"/></svg>
<div class="t" style="left:262.07px;top:606px;font-size:12.5px;line-height:14px;height:14px;color:#10102e;transform:scaleX(0.8838);">RootData08 (L)</div>
<div class="a" style="left:262px;top:620px;width:342px;height:10px;background:linear-gradient(#a0a0a0 0,#a0a0a0 10%,#fca4a4 11%,#f46a6a 30%,#dc1414 50%,#c40404 80%,#8a0000 100%);border-radius:2px"></div>
<div class="t" style="left:262.07px;top:631px;font-size:12.5px;line-height:14px;height:14px;color:#10102e;transform:scaleX(0.8774);">NTFS 241 MB free of 3.00 TB</div>
<div class="a" style="left:732px;top:113px;width:754px;height:597px;background:#fff;border:1px solid #1883d7"></div>
<svg class="a" style="left:741px;top:121px" width="16" height="16" viewBox="0 0 16 16"><path d="M3.4 0h9.8l2.2 3.6H1.4z" fill="#d8dbde" stroke="#b4b8bc" stroke-width="0.5"/><rect x="1.6" y="3.5" width="14" height="3.8" fill="#2e3134"/><rect x="1.6" y="3.3" width="14" height="0.7" fill="#8f9398"/><rect x="12" y="4.6" width="2" height="1.6" fill="#39e039"/><rect x="0.6" y="7.3" width="11.4" height="7.6" fill="#e8e8e8" stroke="#8d8d8d" stroke-width="0.8"/><rect x="2.4" y="9.2" width="2" height="3" fill="#2e3134"/><rect x="7.8" y="9.2" width="2" height="3" fill="#2e3134"/><rect x="4.4" y="9.2" width="3.4" height="3" fill="#fafafa"/></svg>
<div class="t" style="left:762.25px;top:122px;font-size:12px;line-height:14px;height:14px;transform:scaleX(0.9828);">Disk Management</div>
<div class="a" style="left:1366px;top:128px;width:10px;height:1px;background:#000"></div>
<div class="a" style="left:1411px;top:123px;width:10px;height:10px;border:1px solid #000"></div>
<svg class="a" style="left:1456px;top:122px" width="12" height="12" viewBox="0 0 12 12"><path d="M1 1l10 10M11 1L1 11" stroke="#000" stroke-width="1.05"/></svg>
<div class="t" style="left:742.95px;top:148px;font-size:12px;line-height:14px;height:14px;transform:scaleX(0.9307);">File</div>
<div class="t" style="left:776.95px;top:148px;font-size:12px;line-height:14px;height:14px;transform:scaleX(1.0711);">Action</div>
<div class="t" style="left:827.85px;top:148px;font-size:12px;line-height:14px;height:14px;transform:scaleX(0.9683);">View</div>
<div class="t" style="left:869.05px;top:148px;font-size:12px;line-height:14px;height:14px;transform:scaleX(1.0078);">Help</div>
<div class="a" style="left:733px;top:166px;width:752px;height:1px;background:#b4b4b4"></div>
<svg class="a" style="left:737.6px;top:171.4px" width="17" height="17" viewBox="0 0 17 17"><defs><linearGradient id="glg" x1="0" y1="0" x2="0" y2="1"><stop offset="0" stop-color="#bdbdbd"/><stop offset="1" stop-color="#8e8e8e"/></linearGradient></defs><path d="M0.8 8 L8 1 V5 H15.6 V11 H8 V15 Z" fill="url(#glg)" stroke="#5e5e5e" stroke-width="1.1" stroke-linejoin="round"/></svg>
<svg class="a" style="left:761.0px;top:171.4px" width="17" height="17" viewBox="0 0 17 17"><defs><linearGradient id="grg" x1="0" y1="0" x2="0" y2="1"><stop offset="0" stop-color="#bdbdbd"/><stop offset="1" stop-color="#8e8e8e"/></linearGradient></defs><path d="M0.8 8 L8 1 V5 H15.6 V11 H8 V15 Z" fill="url(#grg)" stroke="#5e5e5e" stroke-width="1.1" stroke-linejoin="round" transform="translate(16.4,0) scale(-1,1)"/></svg>
<div class="a" style="left:783px;top:170px;width:1px;height:18px;background:#8d8d8d"></div>
<svg class="a" style="left:792px;top:174px" width="16" height="13" viewBox="0 0 16 13"><rect x="0.5" y="0.5" width="15" height="12" fill="#fdfdfd" stroke="#787c82" stroke-width="1"/><rect x="1" y="1" width="14" height="2.2" fill="#a9adb3"/><rect x="11.2" y="1.6" width="1" height="1" fill="#fff"/><rect x="13" y="1.6" width="1" height="1" fill="#fff"/><rect x="1" y="3.5" width="4.5" height="9" fill="#eef0f3"/><path d="M5.8 3.5v9" stroke="#787c82" stroke-width="0.8"/><rect x="2.2" y="5" width="2.2" height="1.1" fill="#4a86d8"/><rect x="2.2" y="7.4" width="2.2" height="1.1" fill="#4a86d8"/><rect x="2.2" y="9.8" width="2.2" height="1.1" fill="#4a86d8"/><path d="M12.3 5.2v5.6l-4-2.8z" fill="#3cb43c"/></svg>
<div class="a" style="left:814px;top:170px;width:1px;height:18px;background:#8d8d8d"></div>
<svg class="a" style="left:824px;top:171px" width="13" height="16" viewBox="0 0 13 16"><rect x="0" y="0" width="13" height="16" fill="#4a66cf"/><rect x="0" y="0" width="3.2" height="16" fill="#1a2f8f"/><rect x="0" y="15" width="13" height="1" fill="#1a2f8f"/><rect x="12" y="0" width="1" height="16" fill="#2a3fa6"/><path d="M5.2 5.2q0-2.6 2.8-2.6t2.8 2.4q0 1.6-1.5 2.5t-1.4 2.3" fill="none" stroke="#fff" stroke-width="1.7"/><circle cx="7.9" cy="12.6" r="1.1" fill="#fff"/></svg>
<svg class="a" style="left:846px;top:174px" width="16" height="13" viewBox="0 0 16 13"><rect x="0.5" y="0.5" width="15" height="12" fill="#fdfdfd" stroke="#787c82" stroke-width="1"/><rect x="1" y="1" width="14" height="2.2" fill="#a9adb3"/><rect x="11.2" y="1.6" width="1" height="1" fill="#fff"/><rect x="13" y="1.6" width="1" height="1" fill="#fff"/><rect x="10.5" y="3.5" width="4.5" height="9" fill="#eef0f3"/><path d="M10.2 3.5v9" stroke="#787c82" stroke-width="0.8"/><rect x="11.6" y="5" width="2.2" height="1.1" fill="#4a86d8"/><rect x="11.6" y="7.4" width="2.2" height="1.1" fill="#4a86d8"/><rect x="11.6" y="9.8" width="2.2" height="1.1" fill="#4a86d8"/><path d="M3.8 5.2v5.6l4-2.8z" fill="#3cb43c"/></svg>
<div class="a" style="left:868px;top:170px;width:1px;height:18px;background:#8d8d8d"></div>
<svg class="a" style="left:877px;top:174px" width="16" height="14" viewBox="0 0 16 14"><path d="M2 0.6h11l1.6 3.4H0.6z" fill="#d6d9dc"/><rect x="0.6" y="4" width="14" height="4.6" fill="#3b3e42"/><rect x="10.4" y="5.3" width="2.4" height="2" fill="#39d039"/><circle cx="5.4" cy="6.4" r="3.3" fill="#bcd6f2" fill-opacity="0.85" stroke="#8a9099" stroke-width="1"/><path d="M3.2 9l-3 3.6" stroke="#6f747a" stroke-width="1.5"/></svg>
<svg class="a" style="left:900.6px;top:171.6px" width="15" height="15" viewBox="0.4 0.4 13.2 13.2"><path d="M1.2 2.8L3 1l4 4 4-4 1.8 1.8-4 4.2 4 4.2L11 13l-4-4-4 4-1.8-1.8 4-4.2z" fill="#e00b0b" stroke="#b00000" stroke-width="0.5"/></svg>
<svg class="a" style="left:925px;top:171px" width="13" height="17" viewBox="0 0 13 17"><path d="M0.6 0.6h8l3 3v12h-11z" fill="#fbfbfb" stroke="#8b8b8b" stroke-width="1"/><path d="M8.6 0.6v3h3" fill="#e6e6e6" stroke="#8b8b8b" stroke-width="0.8"/><path d="M2.8 9.2l2.2 2.4 4.8-5.4" fill="none" stroke="#f06a2c" stroke-width="1.4"/></svg>
<svg class="a" style="left:948px;top:171px" width="14" height="17" viewBox="0 0 14 17"><rect x="0.5" y="0.5" width="11" height="15" fill="#fbe08a" stroke="#e8c44e" stroke-width="0.9"/><rect x="11" y="8" width="1.6" height="7.5" fill="#f2cf5e"/><path d="M9 7.4l3.6 3.8h-2v4h-3.2v-4h-2z" fill="#16b416"/></svg>
<svg class="a" style="left:971px;top:171px" width="14" height="17" viewBox="0 0 14 17"><rect x="0.5" y="0.5" width="11" height="15" fill="#fbe08a" stroke="#e8c44e" stroke-width="0.9"/><rect x="11" y="8" width="1.6" height="7.5" fill="#f2cf5e"/><circle cx="10" cy="9" r="3.1" fill="#cfe4f7" stroke="#9aa3ad" stroke-width="1"/><path d="M7.8 11.6l-3.6 4" stroke="#777c83" stroke-width="1.5"/></svg>
<svg class="a" style="left:992px;top:173px" width="16" height="13" viewBox="0 0 16 13"><rect x="0.6" y="0.6" width="14.8" height="11" fill="#fdfdfd" stroke="#70757c" stroke-width="1.1"/><rect x="0.6" y="0.6" width="14.8" height="1.6" fill="#70757c"/><path d="M2.6 5.0l1.3 1.4 2.2-2.8" fill="none" stroke="#2b8ae0" stroke-width="1.1"/><rect x="7.6" y="4.8" width="5.6" height="1" fill="#b9bcc0"/><path d="M2.6 8.6l1.3 1.4 2.2-2.8" fill="none" stroke="#2b8ae0" stroke-width="1.1"/><rect x="7.6" y="8.4" width="5.6" height="1" fill="#b9bcc0"/></svg>
<div class="a" style="left:733px;top:189px;width:752px;height:1px;background:#dadada"></div>
<div class="a" style="left:733px;top:190px;width:752px;height:6px;background:#f0f0f0"></div>
<div class="a" style="left:733px;top:196px;width:752px;height:252px;background:#f0f0f0"></div>
<div class="a" style="left:733px;top:196px;width:751px;height:1px;background:#a0a0a0"></div>
<div class="a" style="left:734px;top:197px;width:750px;height:1px;background:#696969"></div>
<div class="a" style="left:733px;top:196px;width:1px;height:252px;background:#a0a0a0"></div>
<div class="a" style="left:734px;top:197px;width:1px;height:250px;background:#696969"></div>
<div class="a" style="left:735px;top:198px;width:748px;height:244px;background:#fff"></div>
<div class="a" style="left:735px;top:198px;width:747px;height:19px;background:#f0f0f0"></div>
<div class="a" style="left:735px;top:215px;width:747px;height:1px;background:#a0a0a0"></div>
<div class="a" style="left:735px;top:216px;width:747px;height:1px;background:#696969"></div>
<div class="a" style="left:735px;top:198px;width:128px;height:1px;background:#fff"></div>
<div class="a" style="left:735px;top:198px;width:1px;height:17px;background:#fff"></div>
<div class="a" style="left:862px;top:199px;width:1px;height:17px;background:#a0a0a0"></div>
<div class="a" style="left:863px;top:198px;width:1px;height:19px;background:#696969"></div>
<div class="t" style="left:741.05px;top:201px;font-size:12px;line-height:14px;height:14px;transform:scaleX(1.0260);">Volume</div>
<div class="a" style="left:864px;top:198px;width:75px;height:1px;background:#fff"></div>
<div class="a" style="left:864px;top:198px;width:1px;height:17px;background:#fff"></div>
<div class="a" style="left:938px;top:199px;width:1px;height:17px;background:#a0a0a0"></div>
<div class="a" style="left:939px;top:198px;width:1px;height:19px;background:#696969"></div>
<div class="t" style="left:870.25px;top:201px;font-size:12px;line-height:14px;height:14px;transform:scaleX(0.9756);">Layout</div>
<div class="a" style="left:940px;top:198px;width:67px;height:1px;background:#fff"></div>
<div class="a" style="left:940px;top:198px;width:1px;height:17px;background:#fff"></div>
<div class="a" style="left:1006px;top:199px;width:1px;height:17px;background:#a0a0a0"></div>
<div class="a" style="left:1007px;top:198px;width:1px;height:19px;background:#696969"></div>
<div class="t" style="left:946.25px;top:201px;font-size:12px;line-height:14px;height:14px;transform:scaleX(0.9870);">Type</div>
<div class="a" style="left:1008px;top:198px;width:85px;height:1px;background:#fff"></div>
<div class="a" style="left:1008px;top:198px;width:1px;height:17px;background:#fff"></div>
<div class="a" style="left:1092px;top:199px;width:1px;height:17px;background:#a0a0a0"></div>
<div class="a" style="left:1093px;top:198px;width:1px;height:19px;background:#696969"></div>
<div class="t" style="left:1014.25px;top:201px;font-size:12px;line-height:14px;height:14px;transform:scaleX(0.9333);">File System</div>
<div class="a" style="left:1094px;top:198px;width:76px;height:1px;background:#fff"></div>
<div class="a" style="left:1094px;top:198px;width:1px;height:17px;background:#fff"></div>
<div class="a" style="left:1169px;top:199px;width:1px;height:17px;background:#a0a0a0"></div>
<div class="a" style="left:1170px;top:198px;width:1px;height:19px;background:#696969"></div>
<div class="t" style="left:1100.05px;top:201px;font-size:12px;line-height:14px;height:14px;transform:scaleX(0.9348);">Status</div>
<div class="a" style="left:1171px;top:198px;width:95px;height:1px;background:#fff"></div>
<div class="a" style="left:1171px;top:198px;width:1px;height:17px;background:#fff"></div>
<div class="a" style="left:1265px;top:199px;width:1px;height:17px;background:#a0a0a0"></div>
<div class="a" style="left:1266px;top:198px;width:1px;height:19px;background:#696969"></div>
<div class="t" style="left:1177.35px;top:201px;font-size:12px;line-height:14px;height:14px;transform:scaleX(0.9703);">Capacity</div>
<div class="a" style="left:1267px;top:198px;width:65px;height:1px;background:#fff"></div>
<div class="a" style="left:1267px;top:198px;width:1px;height:17px;background:#fff"></div>
<div class="a" style="left:1331px;top:199px;width:1px;height:17px;background:#a0a0a0"></div>
<div class="a" style="left:1332px;top:198px;width:1px;height:19px;background:#696969"></div>
<div class="t" style="left:1273.25px;top:201px;font-size:12px;line-height:14px;height:14px;transform:scaleX(0.8877);">Free Spa...</div>
<div class="a" style="left:1333px;top:198px;width:90px;height:1px;background:#fff"></div>
<div class="a" style="left:1333px;top:198px;width:1px;height:17px;background:#fff"></div>
<div class="a" style="left:1422px;top:199px;width:1px;height:17px;background:#a0a0a0"></div>
<div class="a" style="left:1423px;top:198px;width:1px;height:19px;background:#696969"></div>
<div class="t" style="left:1339.75px;top:201px;font-size:12px;line-height:14px;height:14px;transform:scaleX(0.8794);">% Free</div>
<div class="a" style="left:1424px;top:198px;width:58px;height:1px;background:#fff"></div>
<div class="a" style="left:1424px;top:198px;width:1px;height:17px;background:#fff"></div>
<svg class="a" style="left:738px;top:221px" width="14" height="8" viewBox="0 0 14 8"><rect x="2" y="0" width="1" height="1" fill="#318ef5"/><rect x="4" y="0" width="1" height="1" fill="#318ef5"/><rect x="6" y="0" width="1" height="1" fill="#318ef5"/><rect x="8" y="0" width="1" height="1" fill="#318ef5"/><rect x="10" y="0" width="1" height="1" fill="#318ef5"/><rect x="1" y="1" width="1" height="1" fill="#318ef5"/><rect x="3" y="1" width="1" height="1" fill="#318ef5"/><rect x="5" y="1" width="1" height="1" fill="#318ef5"/><rect x="7" y="1" width="1" height="1" fill="#318ef5"/><rect x="9" y="1" width="1" height="1" fill="#318ef5"/><rect x="11" y="1" width="1" height="1" fill="#318ef5"/><rect x="0" y="2" width="1" height="1" fill="#318ef5"/><rect x="2" y="2" width="1" height="1" fill="#318ef5"/><rect x="4" y="2" width="1" height="1" fill="#318ef5"/><rect x="6" y="2" width="1" height="1" fill="#318ef5"/><rect x="8" y="2" width="1" height="1" fill="#318ef5"/><rect x="10" y="2" width="1" height="1" fill="#318ef5"/><rect x="12" y="2" width="1" height="1" fill="#318ef5"/><rect x="1" y="3" width="1" height="1" fill="#318ef5"/><rect x="3" y="3" width="1" height="1" fill="#318ef5"/><rect x="5" y="3" width="1" height="1" fill="#318ef5"/><rect x="7" y="3" width="1" height="1" fill="#318ef5"/><rect x="9" y="3" width="1" height="1" fill="#318ef5"/><rect x="11" y="3" width="1" height="1" fill="#318ef5"/><rect x="13" y="3" width="1" height="1" fill="#318ef5"/><rect x="0" y="4" width="1" height="1" fill="#1c3a58"/><rect x="1" y="4" width="1" height="1" fill="#63abf8"/><rect x="2" y="4" width="1" height="1" fill="#1c3a58"/><rect x="3" y="4" width="1" height="1" fill="#63abf8"/><rect x="4" y="4" width="1" height="1" fill="#1c3a58"/><rect x="5" y="4" width="1" height="1" fill="#63abf8"/><rect x="6" y="4" width="1" height="1" fill="#1c3a58"/><rect x="7" y="4" width="1" height="1" fill="#63abf8"/><rect x="8" y="4" width="1" height="1" fill="#1c3a58"/><rect x="9" y="4" width="1" height="1" fill="#63abf8"/><rect x="10" y="4" width="1" height="1" fill="#1c3a58"/><rect x="11" y="4" width="1" height="1" fill="#63abf8"/><rect x="12" y="4" width="1" height="1" fill="#1c3a58"/><rect x="13" y="4" width="1" height="1" fill="#63abf8"/><rect x="0" y="5" width="1" height="1" fill="#63abf8"/><rect x="1" y="5" width="1" height="1" fill="#1c3a58"/><rect x="2" y="5" width="1" height="1" fill="#63abf8"/><rect x="3" y="5" width="1" height="1" fill="#1c3a58"/><rect x="4" y="5" width="1" height="1" fill="#63abf8"/><rect x="5" y="5" width="1" height="1" fill="#1c3a58"/><rect x="6" y="5" width="1" height="1" fill="#63abf8"/><rect x="7" y="5" width="1" height="1" fill="#1c3a58"/><rect x="8" y="5" width="1" height="1" fill="#63abf8"/><rect x="9" y="5" width="1" height="1" fill="#1c3a58"/><rect x="10" y="5" width="1" height="1" fill="#63abf8"/><rect x="11" y="5" width="1" height="1" fill="#1c3a58"/><rect x="12" y="5" width="1" height="1" fill="#63abf8"/><rect x="13" y="5" width="1" height="1" fill="#1c3a58"/><rect x="0" y="6" width="1" height="1" fill="#1c3a58"/><rect x="1" y="6" width="1" height="1" fill="#63abf8"/><rect x="2" y="6" width="1" height="1" fill="#1c3a58"/><rect x="3" y="6" width="1" height="1" fill="#63abf8"/><rect x="4" y="6" width="1" height="1" fill="#1c3a58"/><rect x="5" y="6" width="1" height="1" fill="#63abf8"/><rect x="6" y="6" width="1" height="1" fill="#1c3a58"/><rect x="7" y="6" width="1" height="1" fill="#63abf8"/><rect x="8" y="6" width="1" height="1" fill="#1c3a58"/><rect x="9" y="6" width="1" height="1" fill="#63abf8"/><rect x="10" y="6" width="1" height="1" fill="#1c3a58"/><rect x="11" y="6" width="1" height="1" fill="#63abf8"/><rect x="12" y="6" width="1" height="1" fill="#1c3a58"/><rect x="13" y="6" width="1" height="1" fill="#63abf8"/><rect x="0" y="7" width="1" height="1" fill="#63abf8"/><rect x="1" y="7" width="1" height="1" fill="#1c3a58"/><rect x="2" y="7" width="1" height="1" fill="#63abf8"/><rect x="3" y="7" width="1" height="1" fill="#1c3a58"/><rect x="4" y="7" width="1" height="1" fill="#63abf8"/><rect x="5" y="7" width="1" height="1" fill="#1c3a58"/><rect x="6" y="7" width="1" height="1" fill="#63abf8"/><rect x="7" y="7" width="1" height="1" fill="#1c3a58"/><rect x="8" y="7" width="1" height="1" fill="#63abf8"/><rect x="9" y="7" width="1" height="1" fill="#1c3a58"/><rect x="10" y="7" width="1" height="1" fill="#63abf8"/><rect x="11" y="7" width="1" height="1" fill="#1c3a58"/><rect x="12" y="7" width="1" height="1" fill="#63abf8"/><rect x="13" y="7" width="1" height="1" fill="#1c3a58"/><rect x="10" y="5" width="1" height="1" fill="#22a04a"/><rect x="11" y="4" width="1" height="1" fill="#22a04a"/><rect x="11" y="6" width="1" height="1" fill="#22a04a"/></svg>
<div class="a" style="left:753px;top:217px;width:30px;height:17px;background:#3399ff"></div>
<div class="t" style="left:758.35px;top:219px;font-size:12px;line-height:14px;height:14px;color:#fff;transform:scaleX(0.9252);">(C:)</div>
<div class="t" style="left:870.25px;top:219px;font-size:12px;line-height:14px;height:14px;transform:scaleX(0.9674);">Simple</div>
<div class="t" style="left:946.25px;top:219px;font-size:12px;line-height:14px;height:14px;transform:scaleX(0.8963);">Basic</div>
<div class="t" style="left:1014.25px;top:219px;font-size:12px;line-height:14px;height:14px;transform:scaleX(0.8906);">NTFS</div>
<div class="t" style="left:1100.05px;top:219px;font-size:12px;line-height:14px;height:14px;transform:scaleX(0.9697);">Healthy (B...</div>
<div class="t" style="left:1177.15px;top:219px;font-size:12px;line-height:14px;height:14px;transform:scaleX(0.8817);">79.51 GB</div>
<div class="t" style="left:1273.25px;top:219px;font-size:12px;line-height:14px;height:14px;transform:scaleX(0.8837);">52.16 GB</div>
<div class="t" style="left:1339.15px;top:219px;font-size:12px;line-height:14px;height:14px;transform:scaleX(0.8995);">66 %</div>
<svg class="a" style="left:738px;top:238px" width="14" height="8" viewBox="0 0 14 8"><defs><linearGradient id="gvt" x1="0" y1="0" x2="0" y2="1"><stop offset="0" stop-color="#e2e2e6"/><stop offset="1" stop-color="#c2c2c8"/></linearGradient></defs><path d="M1.2 0h11.6l1 3.8H0.2z" fill="url(#gvt)"/><rect x="0.8" y="3.7" width="12.4" height="3.4" fill="#2b2b2d"/><rect x="10.1" y="4.6" width="2.1" height="1.5" fill="#3cf03c"/><rect x="0.2" y="7" width="13.6" height="0.9" fill="#cdcdd0"/></svg>
<div class="t" style="left:755.15px;top:236px;font-size:12px;line-height:14px;height:14px;transform:scaleX(0.9295);">RootData01 (E:)</div>
<div class="t" style="left:870.25px;top:236px;font-size:12px;line-height:14px;height:14px;transform:scaleX(0.9674);">Simple</div>
<div class="t" style="left:946.25px;top:236px;font-size:12px;line-height:14px;height:14px;transform:scaleX(0.8963);">Basic</div>
<div class="t" style="left:1014.25px;top:236px;font-size:12px;line-height:14px;height:14px;transform:scaleX(0.8906);">NTFS</div>
<div class="t" style="left:1100.05px;top:236px;font-size:12px;line-height:14px;height:14px;transform:scaleX(0.9931);">Healthy (P...</div>
<div class="t" style="left:1177.15px;top:236px;font-size:12px;line-height:14px;height:14px;transform:scaleX(0.9335);">990 MB</div>
<div class="t" style="left:1273.25px;top:236px;font-size:12px;line-height:14px;height:14px;transform:scaleX(0.9286);">605 MB</div>
<div class="t" style="left:1339.15px;top:236px;font-size:12px;line-height:14px;height:14px;transform:scaleX(0.8995);">61 %</div>
<svg class="a" style="left:738px;top:255px" width="14" height="8" viewBox="0 0 14 8"><defs><linearGradient id="gvt" x1="0" y1="0" x2="0" y2="1"><stop offset="0" stop-color="#e2e2e6"/><stop offset="1" stop-color="#c2c2c8"/></linearGradient></defs><path d="M1.2 0h11.6l1 3.8H0.2z" fill="url(#gvt)"/><rect x="0.8" y="3.7" width="12.4" height="3.4" fill="#2b2b2d"/><rect x="10.1" y="4.6" width="2.1" height="1.5" fill="#3cf03c"/><rect x="0.2" y="7" width="13.6" height="0.9" fill="#cdcdd0"/></svg>
<div class="t" style="left:755.15px;top:253px;font-size:12px;line-height:14px;height:14px;transform:scaleX(0.9345);">RootData02 (F:)</div>
<div class="t" style="left:870.25px;top:253px;font-size:12px;line-height:14px;height:14px;transform:scaleX(0.9674);">Simple</div>
<div class="t" style="left:946.25px;top:253px;font-size:12px;line-height:14px;height:14px;transform:scaleX(0.8963);">Basic</div>
<div class="t" style="left:1014.25px;top:253px;font-size:12px;line-height:14px;height:14px;transform:scaleX(0.8906);">NTFS</div>
<div class="t" style="left:1100.05px;top:253px;font-size:12px;line-height:14px;height:14px;transform:scaleX(0.9931);">Healthy (P...</div>
<div class="t" style="left:1177.15px;top:253px;font-size:12px;line-height:14px;height:14px;transform:scaleX(0.8822);">1023.87 GB</div>
<div class="t" style="left:1273.25px;top:253px;font-size:12px;line-height:14px;height:14px;transform:scaleX(0.8837);">82.13 GB</div>
<div class="t" style="left:1339.15px;top:253px;font-size:12px;line-height:14px;height:14px;transform:scaleX(0.9044);">8 %</div>
<svg class="a" style="left:738px;top:272px" width="14" height="8" viewBox="0 0 14 8"><defs><linearGradient id="gvt" x1="0" y1="0" x2="0" y2="1"><stop offset="0" stop-color="#e2e2e6"/><stop offset="1" stop-color="#c2c2c8"/></linearGradient></defs><path d="M1.2 0h11.6l1 3.8H0.2z" fill="url(#gvt)"/><rect x="0.8" y="3.7" width="12.4" height="3.4" fill="#2b2b2d"/><rect x="10.1" y="4.6" width="2.1" height="1.5" fill="#3cf03c"/><rect x="0.2" y="7" width="13.6" height="0.9" fill="#cdcdd0"/></svg>
<div class="t" style="left:755.15px;top:270px;font-size:12px;line-height:14px;height:14px;transform:scaleX(0.9382);">RootData03 (G:)</div>
<div class="t" style="left:870.25px;top:270px;font-size:12px;line-height:14px;height:14px;transform:scaleX(0.9674);">Simple</div>
<div class="t" style="left:946.25px;top:270px;font-size:12px;line-height:14px;height:14px;transform:scaleX(0.8963);">Basic</div>
<div class="t" style="left:1014.25px;top:270px;font-size:12px;line-height:14px;height:14px;transform:scaleX(0.8906);">NTFS</div>
<div class="t" style="left:1100.05px;top:270px;font-size:12px;line-height:14px;height:14px;transform:scaleX(0.9931);">Healthy (P...</div>
<div class="t" style="left:1177.15px;top:270px;font-size:12px;line-height:14px;height:14px;transform:scaleX(0.8822);">1023.87 GB</div>
<div class="t" style="left:1273.25px;top:270px;font-size:12px;line-height:14px;height:14px;transform:scaleX(0.8785);">533.97 GB</div>
<div class="t" style="left:1339.15px;top:270px;font-size:12px;line-height:14px;height:14px;transform:scaleX(0.8995);">52 %</div>
<svg class="a" style="left:738px;top:289px" width="14" height="8" viewBox="0 0 14 8"><defs><linearGradient id="gvt" x1="0" y1="0" x2="0" y2="1"><stop offset="0" stop-color="#e2e2e6"/><stop offset="1" stop-color="#c2c2c8"/></linearGradient></defs><path d="M1.2 0h11.6l1 3.8H0.2z" fill="url(#gvt)"/><rect x="0.8" y="3.7" width="12.4" height="3.4" fill="#2b2b2d"/><rect x="10.1" y="4.6" width="2.1" height="1.5" fill="#3cf03c"/><rect x="0.2" y="7" width="13.6" height="0.9" fill="#cdcdd0"/></svg>
<div class="t" style="left:755.15px;top:287px;font-size:12px;line-height:14px;height:14px;transform:scaleX(0.9534);">RootData04 (H:)</div>
<div class="t" style="left:870.25px;top:287px;font-size:12px;line-height:14px;height:14px;transform:scaleX(0.9674);">Simple</div>
<div class="t" style="left:946.25px;top:287px;font-size:12px;line-height:14px;height:14px;transform:scaleX(0.8963);">Basic</div>
<div class="t" style="left:1014.25px;top:287px;font-size:12px;line-height:14px;height:14px;transform:scaleX(0.8906);">NTFS</div>
<div class="t" style="left:1100.05px;top:287px;font-size:12px;line-height:14px;height:14px;transform:scaleX(0.9931);">Healthy (P...</div>
<div class="t" style="left:1177.15px;top:287px;font-size:12px;line-height:14px;height:14px;transform:scaleX(0.8822);">1023.87 GB</div>
<div class="t" style="left:1273.25px;top:287px;font-size:12px;line-height:14px;height:14px;transform:scaleX(0.8785);">425.36 GB</div>
<div class="t" style="left:1339.15px;top:287px;font-size:12px;line-height:14px;height:14px;transform:scaleX(0.8995);">42 %</div>
<svg class="a" style="left:738px;top:306px" width="14" height="8" viewBox="0 0 14 8"><defs><linearGradient id="gvt" x1="0" y1="0" x2="0" y2="1"><stop offset="0" stop-color="#e2e2e6"/><stop offset="1" stop-color="#c2c2c8"/></linearGradient></defs><path d="M1.2 0h11.6l1 3.8H0.2z" fill="url(#gvt)"/><rect x="0.8" y="3.7" width="12.4" height="3.4" fill="#2b2b2d"/><rect x="10.1" y="4.6" width="2.1" height="1.5" fill="#3cf03c"/><rect x="0.2" y="7" width="13.6" height="0.9" fill="#cdcdd0"/></svg>
<div class="t" style="left:755.15px;top:304px;font-size:12px;line-height:14px;height:14px;transform:scaleX(0.9434);">RootData05 (I:)</div>
<div class="t" style="left:870.25px;top:304px;font-size:12px;line-height:14px;height:14px;transform:scaleX(0.9674);">Simple</div>
<div class="t" style="left:946.25px;top:304px;font-size:12px;line-height:14px;height:14px;transform:scaleX(0.8963);">Basic</div>
<div class="t" style="left:1014.25px;top:304px;font-size:12px;line-height:14px;height:14px;transform:scaleX(0.8906);">NTFS</div>
<div class="t" style="left:1100.05px;top:304px;font-size:12px;line-height:14px;height:14px;transform:scaleX(0.9931);">Healthy (P...</div>
<div class="t" style="left:1177.15px;top:304px;font-size:12px;line-height:14px;height:14px;transform:scaleX(0.8822);">1023.87 GB</div>
<div class="t" style="left:1273.25px;top:304px;font-size:12px;line-height:14px;height:14px;transform:scaleX(0.8785);">508.04 GB</div>
<div class="t" style="left:1339.15px;top:304px;font-size:12px;line-height:14px;height:14px;transform:scaleX(0.8995);">50 %</div>
<svg class="a" style="left:738px;top:323px" width="14" height="8" viewBox="0 0 14 8"><defs><linearGradient id="gvt" x1="0" y1="0" x2="0" y2="1"><stop offset="0" stop-color="#e2e2e6"/><stop offset="1" stop-color="#c2c2c8"/></linearGradient></defs><path d="M1.2 0h11.6l1 3.8H0.2z" fill="url(#gvt)"/><rect x="0.8" y="3.7" width="12.4" height="3.4" fill="#2b2b2d"/><rect x="10.1" y="4.6" width="2.1" height="1.5" fill="#3cf03c"/><rect x="0.2" y="7" width="13.6" height="0.9" fill="#cdcdd0"/></svg>
<div class="t" style="left:755.15px;top:321px;font-size:12px;line-height:14px;height:14px;transform:scaleX(0.9255);">RootData06 (J:)</div>
<div class="t" style="left:870.25px;top:321px;font-size:12px;line-height:14px;height:14px;transform:scaleX(0.9674);">Simple</div>
<div class="t" style="left:946.25px;top:321px;font-size:12px;line-height:14px;height:14px;transform:scaleX(0.8963);">Basic</div>
<div class="t" style="left:1014.25px;top:321px;font-size:12px;line-height:14px;height:14px;transform:scaleX(0.8906);">NTFS</div>
<div class="t" style="left:1100.05px;top:321px;font-size:12px;line-height:14px;height:14px;transform:scaleX(0.9931);">Healthy (P...</div>
<div class="t" style="left:1177.15px;top:321px;font-size:12px;line-height:14px;height:14px;transform:scaleX(0.8822);">1023.87 GB</div>
<div class="t" style="left:1273.25px;top:321px;font-size:12px;line-height:14px;height:14px;transform:scaleX(0.8785);">262.02 GB</div>
<div class="t" style="left:1339.15px;top:321px;font-size:12px;line-height:14px;height:14px;transform:scaleX(0.8995);">26 %</div>
<svg class="a" style="left:738px;top:340px" width="14" height="8" viewBox="0 0 14 8"><defs><linearGradient id="gvt" x1="0" y1="0" x2="0" y2="1"><stop offset="0" stop-color="#e2e2e6"/><stop offset="1" stop-color="#c2c2c8"/></linearGradient></defs><path d="M1.2 0h11.6l1 3.8H0.2z" fill="url(#gvt)"/><rect x="0.8" y="3.7" width="12.4" height="3.4" fill="#2b2b2d"/><rect x="10.1" y="4.6" width="2.1" height="1.5" fill="#3cf03c"/><rect x="0.2" y="7" width="13.6" height="0.9" fill="#cdcdd0"/></svg>
<div class="t" style="left:755.15px;top:338px;font-size:12px;line-height:14px;height:14px;transform:scaleX(0.9388);">RootData07 (K:)</div>
<div class="t" style="left:870.25px;top:338px;font-size:12px;line-height:14px;height:14px;transform:scaleX(0.9674);">Simple</div>
<div class="t" style="left:946.25px;top:338px;font-size:12px;line-height:14px;height:14px;transform:scaleX(0.8963);">Basic</div>
<div class="t" style="left:1014.25px;top:338px;font-size:12px;line-height:14px;height:14px;transform:scaleX(0.8906);">NTFS</div>
<div class="t" style="left:1100.05px;top:338px;font-size:12px;line-height:14px;height:14px;transform:scaleX(0.9931);">Healthy (P...</div>
<div class="t" style="left:1177.15px;top:338px;font-size:12px;line-height:14px;height:14px;transform:scaleX(0.8822);">1023.87 GB</div>
<div class="t" style="left:1273.25px;top:338px;font-size:12px;line-height:14px;height:14px;transform:scaleX(0.8785);">168.32 GB</div>
<div class="t" style="left:1339.15px;top:338px;font-size:12px;line-height:14px;height:14px;transform:scaleX(0.8995);">16 %</div>
<svg class="a" style="left:738px;top:357px" width="14" height="8" viewBox="0 0 14 8"><defs><linearGradient id="gvt" x1="0" y1="0" x2="0" y2="1"><stop offset="0" stop-color="#e2e2e6"/><stop offset="1" stop-color="#c2c2c8"/></linearGradient></defs><path d="M1.2 0h11.6l1 3.8H0.2z" fill="url(#gvt)"/><rect x="0.8" y="3.7" width="12.4" height="3.4" fill="#2b2b2d"/><rect x="10.1" y="4.6" width="2.1" height="1.5" fill="#3cf03c"/><rect x="0.2" y="7" width="13.6" height="0.9" fill="#cdcdd0"/></svg>
<div class="t" style="left:755.15px;top:355px;font-size:12px;line-height:14px;height:14px;transform:scaleX(0.9417);">RootData08 (L:)</div>
<div class="t" style="left:870.25px;top:355px;font-size:12px;line-height:14px;height:14px;transform:scaleX(0.9674);">Simple</div>
<div class="t" style="left:946.25px;top:355px;font-size:12px;line-height:14px;height:14px;transform:scaleX(0.8963);">Basic</div>
<div class="t" style="left:1014.25px;top:355px;font-size:12px;line-height:14px;height:14px;transform:scaleX(0.8906);">NTFS</div>
<div class="t" style="left:1100.05px;top:355px;font-size:12px;line-height:14px;height:14px;transform:scaleX(0.9931);">Healthy (P...</div>
<div class="t" style="left:1177.15px;top:355px;font-size:12px;line-height:14px;height:14px;transform:scaleX(0.8822);">3071.87 GB</div>
<div class="t" style="left:1273.25px;top:355px;font-size:12px;line-height:14px;height:14px;transform:scaleX(0.9286);">241 MB</div>
<div class="t" style="left:1339.15px;top:355px;font-size:12px;line-height:14px;height:14px;transform:scaleX(0.9044);">0 %</div>
<svg class="a" style="left:738px;top:374px" width="14" height="8" viewBox="0 0 14 8"><defs><linearGradient id="gvt" x1="0" y1="0" x2="0" y2="1"><stop offset="0" stop-color="#e2e2e6"/><stop offset="1" stop-color="#c2c2c8"/></linearGradient></defs><path d="M1.2 0h11.6l1 3.8H0.2z" fill="url(#gvt)"/><rect x="0.8" y="3.7" width="12.4" height="3.4" fill="#2b2b2d"/><rect x="10.1" y="4.6" width="2.1" height="1.5" fill="#3cf03c"/><rect x="0.2" y="7" width="13.6" height="0.9" fill="#cdcdd0"/></svg>
<div class="t" style="left:755.15px;top:372px;font-size:12px;line-height:14px;height:14px;transform:scaleX(0.9628);">RootData09 (M:)</div>
<div class="t" style="left:870.25px;top:372px;font-size:12px;line-height:14px;height:14px;transform:scaleX(0.9674);">Simple</div>
<div class="t" style="left:946.25px;top:372px;font-size:12px;line-height:14px;height:14px;transform:scaleX(0.8963);">Basic</div>
<div class="t" style="left:1014.25px;top:372px;font-size:12px;line-height:14px;height:14px;transform:scaleX(0.8906);">NTFS</div>
<div class="t" style="left:1100.05px;top:372px;font-size:12px;line-height:14px;height:14px;transform:scaleX(0.9931);">Healthy (P...</div>
<div class="t" style="left:1177.15px;top:372px;font-size:12px;line-height:14px;height:14px;transform:scaleX(0.8822);">4095.87 GB</div>
<div class="t" style="left:1273.25px;top:372px;font-size:12px;line-height:14px;height:14px;transform:scaleX(0.8975);">2582.50 ...</div>
<div class="t" style="left:1339.15px;top:372px;font-size:12px;line-height:14px;height:14px;transform:scaleX(0.8995);">63 %</div>
<svg class="a" style="left:738px;top:391px" width="14" height="8" viewBox="0 0 14 8"><defs><linearGradient id="gvt" x1="0" y1="0" x2="0" y2="1"><stop offset="0" stop-color="#e2e2e6"/><stop offset="1" stop-color="#c2c2c8"/></linearGradient></defs><path d="M1.2 0h11.6l1 3.8H0.2z" fill="url(#gvt)"/><rect x="0.8" y="3.7" width="12.4" height="3.4" fill="#2b2b2d"/><rect x="10.1" y="4.6" width="2.1" height="1.5" fill="#3cf03c"/><rect x="0.2" y="7" width="13.6" height="0.9" fill="#cdcdd0"/></svg>
<div class="t" style="left:755.15px;top:389px;font-size:12px;line-height:14px;height:14px;transform:scaleX(0.9534);">RootData10 (N:)</div>
<div class="t" style="left:870.25px;top:389px;font-size:12px;line-height:14px;height:14px;transform:scaleX(0.9674);">Simple</div>
<div class="t" style="left:946.25px;top:389px;font-size:12px;line-height:14px;height:14px;transform:scaleX(0.8963);">Basic</div>
<div class="t" style="left:1014.25px;top:389px;font-size:12px;line-height:14px;height:14px;transform:scaleX(0.8906);">NTFS</div>
<div class="t" style="left:1100.05px;top:389px;font-size:12px;line-height:14px;height:14px;transform:scaleX(0.9931);">Healthy (P...</div>
<div class="t" style="left:1177.15px;top:389px;font-size:12px;line-height:14px;height:14px;transform:scaleX(0.8822);">2047.87 GB</div>
<div class="t" style="left:1273.25px;top:389px;font-size:12px;line-height:14px;height:14px;transform:scaleX(0.8785);">960.91 GB</div>
<div class="t" style="left:1339.15px;top:389px;font-size:12px;line-height:14px;height:14px;transform:scaleX(0.8995);">47 %</div>
<svg class="a" style="left:738px;top:408px" width="14" height="8" viewBox="0 0 14 8"><defs><linearGradient id="gvt" x1="0" y1="0" x2="0" y2="1"><stop offset="0" stop-color="#e2e2e6"/><stop offset="1" stop-color="#c2c2c8"/></linearGradient></defs><path d="M1.2 0h11.6l1 3.8H0.2z" fill="url(#gvt)"/><rect x="0.8" y="3.7" width="12.4" height="3.4" fill="#2b2b2d"/><rect x="10.1" y="4.6" width="2.1" height="1.5" fill="#3cf03c"/><rect x="0.2" y="7" width="13.6" height="0.9" fill="#cdcdd0"/></svg>
<div class="t" style="left:755.15px;top:406px;font-size:12px;line-height:14px;height:14px;transform:scaleX(0.9295);">System Reserved</div>
<div class="t" style="left:870.25px;top:406px;font-size:12px;line-height:14px;height:14px;transform:scaleX(0.9674);">Simple</div>
<div class="t" style="left:946.25px;top:406px;font-size:12px;line-height:14px;height:14px;transform:scaleX(0.8963);">Basic</div>
<div class="t" style="left:1014.25px;top:406px;font-size:12px;line-height:14px;height:14px;transform:scaleX(0.8906);">NTFS</div>
<div class="t" style="left:1100.05px;top:406px;font-size:12px;line-height:14px;height:14px;transform:scaleX(0.9697);">Healthy (S...</div>
<div class="t" style="left:1177.15px;top:406px;font-size:12px;line-height:14px;height:14px;transform:scaleX(0.9335);">500 MB</div>
<div class="t" style="left:1273.25px;top:406px;font-size:12px;line-height:14px;height:14px;transform:scaleX(0.9286);">163 MB</div>
<div class="t" style="left:1339.15px;top:406px;font-size:12px;line-height:14px;height:14px;transform:scaleX(0.8995);">33 %</div>
<div class="a" style="left:735px;top:442px;width:748px;height:1px;background:#e3e3e3"></div>
<div class="a" style="left:733px;top:443px;width:752px;height:4px;background:#f0f0f0"></div>
<div class="a" style="left:733px;top:446px;width:751px;height:1px;background:#fff"></div>
<div class="a" style="left:733px;top:447px;width:751px;height:1px;background:#a0a0a0"></div>
<div class="a" style="left:734px;top:448px;width:750px;height:1px;background:#696969"></div>
<div class="a" style="left:1483px;top:197px;width:1px;height:251px;background:#e3e3e3"></div>
<div class="a" style="left:1484px;top:196px;width:1px;height:253px;background:#fff"></div>
<div class="a" style="left:733px;top:449px;width:752px;height:215px;background:#f0f0f0"></div>
<div class="a" style="left:734px;top:449px;width:1px;height:235px;background:#828282"></div>
<div class="a" style="left:736px;top:454px;width:100px;height:98px;background:#f0f0f0;border-top:1px solid #fff;border-left:1px solid #fff;border-right:1px solid #e6e6e6"></div>
<div class="a" style="left:735px;top:552px;width:103px;height:1px;background:#a0a0a0"></div>
<svg class="a" style="left:746px;top:463px" width="14" height="8" viewBox="0 0 14 8"><defs><linearGradient id="gvt" x1="0" y1="0" x2="0" y2="1"><stop offset="0" stop-color="#e2e2e6"/><stop offset="1" stop-color="#c2c2c8"/></linearGradient></defs><path d="M1.2 0h11.6l1 3.8H0.2z" fill="url(#gvt)"/><rect x="0.8" y="3.7" width="12.4" height="3.4" fill="#2b2b2d"/><rect x="10.1" y="4.6" width="2.1" height="1.5" fill="#3cf03c"/><rect x="0.2" y="7" width="13.6" height="0.9" fill="#cdcdd0"/></svg>
<div class="t" style="left:762.65px;top:463px;font-size:12px;line-height:14px;height:14px;font-weight:bold;transform:scaleX(0.9361);">Disk 0</div>
<div class="t" style="left:744.35px;top:478px;font-size:12px;line-height:14px;height:14px;transform:scaleX(0.8895);">Basic</div>
<div class="t" style="left:744.35px;top:493px;font-size:12px;line-height:14px;height:14px;transform:scaleX(0.8791);">1023.88 GB</div>
<div class="t" style="left:744.35px;top:508px;font-size:12px;line-height:14px;height:14px;transform:scaleX(0.9096);">Reserved</div>
<div class="a" style="left:838px;top:454px;width:1px;height:98px;background:#a0a0a0"></div>
<div class="a" style="left:838px;top:454px;width:573px;height:1px;background:#fff"></div>
<div class="a" style="left:839px;top:455px;width:572px;height:97px;background:#f0f0f0;border-right:1px solid #a0a0a0;border-bottom:1px solid #a0a0a0"></div>
<div class="a" style="left:840px;top:460px;width:565px;height:13px;background:#000080"></div>
<div class="a" style="left:839px;top:473px;width:567px;height:1px;background:#a0a0a0"></div>
<div class="a" style="left:843px;top:476px;width:560px;height:68px;background:#fff;border-top:1px solid #696969;border-left:1px solid #696969;border-right:1px solid #e3e3e3;border-bottom:1px solid #e3e3e3"></div>
<div class="a" style="left:839px;top:547px;width:567px;height:1px;background:#a0a0a0"></div>
<div class="a" style="left:1406px;top:459px;width:1px;height:89px;background:#a0a0a0"></div>
<div class="t" style="left:847.35px;top:480px;font-size:12px;line-height:14px;height:14px;font-weight:bold;transform:scaleX(0.9701);">RootData02  (F:)</div>
<div class="t" style="left:847.35px;top:495px;font-size:12px;line-height:14px;height:14px;transform:scaleX(0.8925);">1023.87 GB NTFS</div>
<div class="t" style="left:847.35px;top:510px;font-size:12px;line-height:14px;height:14px;">Healthy (Primary Partition)</div>
<div class="a" style="left:736px;top:553px;width:100px;height:98px;background:#f0f0f0;border-top:1px solid #fff;border-left:1px solid #fff;border-right:1px solid #e6e6e6"></div>
<div class="a" style="left:735px;top:651px;width:103px;height:1px;background:#a0a0a0"></div>
<svg class="a" style="left:746px;top:562px" width="14" height="8" viewBox="0 0 14 8"><defs><linearGradient id="gvt" x1="0" y1="0" x2="0" y2="1"><stop offset="0" stop-color="#e2e2e6"/><stop offset="1" stop-color="#c2c2c8"/></linearGradient></defs><path d="M1.2 0h11.6l1 3.8H0.2z" fill="url(#gvt)"/><rect x="0.8" y="3.7" width="12.4" height="3.4" fill="#2b2b2d"/><rect x="10.1" y="4.6" width="2.1" height="1.5" fill="#3cf03c"/><rect x="0.2" y="7" width="13.6" height="0.9" fill="#cdcdd0"/></svg>
<div class="t" style="left:762.65px;top:562px;font-size:12px;line-height:14px;height:14px;font-weight:bold;transform:scaleX(0.9361);">Disk 1</div>
<div class="t" style="left:744.35px;top:577px;font-size:12px;line-height:14px;height:14px;transform:scaleX(0.8895);">Basic</div>
<div class="t" style="left:744.35px;top:592px;font-size:12px;line-height:14px;height:14px;transform:scaleX(0.9480);">992 MB</div>
<div class="t" style="left:744.35px;top:607px;font-size:12px;line-height:14px;height:14px;transform:scaleX(0.9096);">Reserved</div>
<div class="a" style="left:838px;top:553px;width:1px;height:98px;background:#a0a0a0"></div>
<div class="a" style="left:838px;top:553px;width:289px;height:1px;background:#fff"></div>
<div class="a" style="left:839px;top:554px;width:288px;height:97px;background:#f0f0f0;border-right:1px solid #a0a0a0;border-bottom:1px solid #a0a0a0"></div>
<div class="a" style="left:840px;top:559px;width:281px;height:13px;background:#000080"></div>
<div class="a" style="left:839px;top:572px;width:283px;height:1px;background:#a0a0a0"></div>
<div class="a" style="left:843px;top:575px;width:276px;height:68px;background:#fff;border-top:1px solid #696969;border-left:1px solid #696969;border-right:1px solid #e3e3e3;border-bottom:1px solid #e3e3e3"></div>
<div class="a" style="left:839px;top:646px;width:283px;height:1px;background:#a0a0a0"></div>
<div class="a" style="left:1122px;top:558px;width:1px;height:89px;background:#a0a0a0"></div>
<div class="t" style="left:847.35px;top:579px;font-size:12px;line-height:14px;height:14px;font-weight:bold;transform:scaleX(0.9631);">RootData01  (E:)</div>
<div class="t" style="left:847.35px;top:594px;font-size:12px;line-height:14px;height:14px;transform:scaleX(0.9169);">990 MB NTFS</div>
<div class="t" style="left:847.35px;top:609px;font-size:12px;line-height:14px;height:14px;">Healthy (Primary Partition)</div>
<div class="a" style="left:1466px;top:449px;width:17px;height:215px;background:#f0f0f0;border-left:1px solid #fff"></div>
<svg class="a" style="left:1470.5px;top:455px" width="8" height="6" viewBox="0 0 8 6"><path d="M0.7 5 L4 1.6 L7.3 5" fill="none" stroke="#505050" stroke-width="1.6"/></svg>
<div class="a" style="left:1468px;top:466px;width:14px;height:27px;background:#cdcdcd"></div>
<svg class="a" style="left:1470.5px;top:652.5px" width="8" height="6" viewBox="0 0 8 6"><path d="M0.7 1 L4 4.4 L7.3 1" fill="none" stroke="#505050" stroke-width="1.6"/></svg>
<div class="a" style="left:1483px;top:449px;width:1px;height:215px;background:#e3e3e3"></div>
<div class="a" style="left:735px;top:664px;width:749px;height:1px;background:#fff"></div>
<div class="a" style="left:735px;top:665px;width:748px;height:18px;background:#f0f0f0"></div>
<div class="a" style="left:734px;top:683px;width:749px;height:1px;background:#828282"></div>
<div class="a" style="left:1482px;top:665px;width:1px;height:19px;background:#828282"></div>
<div class="a" style="left:740px;top:667px;width:12px;height:14px;background:#000;border:1px solid #f8f8f8"></div>
<div class="t" style="left:756.25px;top:667px;font-size:12px;line-height:14px;height:14px;">Unallocated</div>
<div class="a" style="left:824px;top:667px;width:12px;height:14px;background:#000080;border:1px solid #f8f8f8"></div>
<div class="t" style="left:840.05px;top:667px;font-size:12px;line-height:14px;height:14px;transform:scaleX(1.0290);">Primary partition</div>
<div class="a" style="left:733px;top:684px;width:752px;height:2px;background:#fff"></div>
<div class="a" style="left:733px;top:686px;width:752px;height:23px;background:#f0f0f0"></div>
<div class="a" style="left:1264px;top:688px;width:1px;height:21px;background:#d7d7d7"></div>
<div class="a" style="left:1397px;top:688px;width:1px;height:21px;background:#d7d7d7"></div>
<div class="a" style="left:1482px;top:688px;width:1px;height:21px;background:#e0e0e0"></div>
<svg class="a" style="left:992px;top:125.7px" width="16" height="24" viewBox="0 0 16 24"><defs><filter id="cb" x="-50%" y="-50%" width="200%" height="200%"><feGaussianBlur stdDeviation="1.1"/></filter></defs><path d="M0.7 0.7v16.2l3.8-3.7 2.7 6.2 2.3-1-2.7-6.1h5.3z" fill="#000" fill-opacity="0.45" transform="translate(1.6,1.8)" filter="url(#cb)"/><path d="M0.7 0.7v16.2l3.8-3.7 2.7 6.2 2.3-1-2.7-6.1h5.3z" fill="#fff" stroke="#000" stroke-width="1" stroke-linejoin="miter"/></svg>
</body></html>
